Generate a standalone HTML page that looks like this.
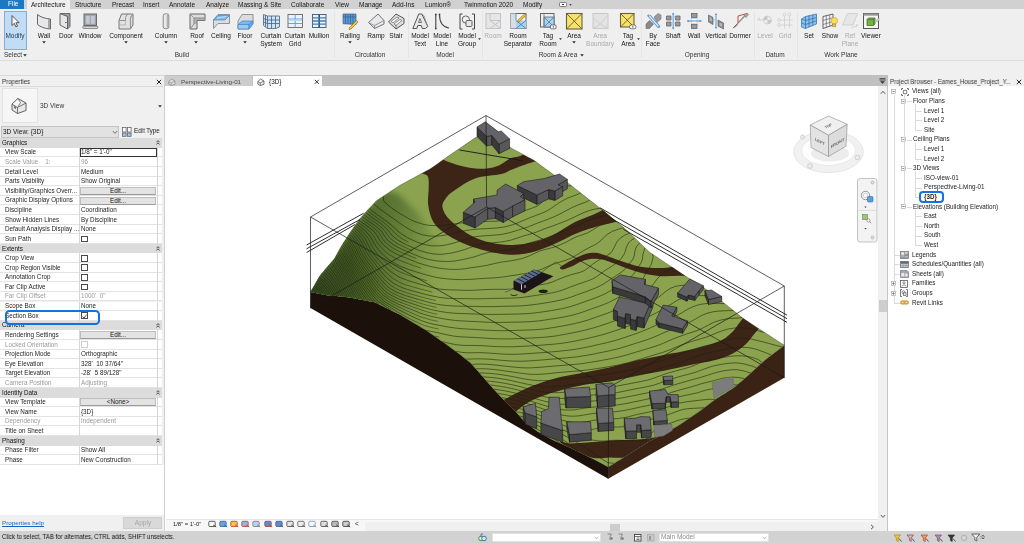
<!DOCTYPE html>
<html lang="en"><head><meta charset="utf-8"><title>Revit - Section Box</title>
<style>
*{box-sizing:border-box;margin:0;padding:0}
html,body{width:1024px;height:543px;overflow:hidden;background:#fff}
body{position:relative;font-family:"Liberation Sans",sans-serif;font-size:6.5px;color:#141414;line-height:1}
.a{position:absolute}
.t{position:absolute;white-space:nowrap;will-change:transform}
.c{position:absolute;white-space:nowrap;text-align:center;transform:translateX(-50%);will-change:transform}
#tabbar{left:0;top:0;width:1024px;height:9px;background:#d1d1d1}
#ribbon{left:0;top:9px;width:1024px;height:51px;background:#efefef}
#optbar{left:0;top:60px;width:1024px;height:15px;background:#f0f0f0;border-top:1px solid #dcdcdc}
#status{left:0;top:531px;width:1024px;height:12px;background:#d2d2d2}
.sep{position:absolute;top:11px;width:1px;height:47px;background:#e5e5e5}
.dis{color:#a9a9a9}
.row{position:absolute;left:0;width:162px;height:9.606px;border-bottom:1px solid #e3e3e3;background:#fff;font-size:6.3px}
.hdr{background:#dcdcdc;border-bottom:none}
.btn{position:absolute;left:80px;top:0.8px;width:76px;height:8px;background:#e3e3e3;border:1px solid #bdbdbd;border-bottom-color:#9a9a9a;text-align:center;line-height:6.5px}
.cb{position:absolute;left:81.3px;top:1.3px;width:6.8px;height:6.8px;border:0.8px solid #4a4a4a;background:#fff}
</style></head>
<body>
<div id="tabbar" class="a"></div>
<div class="a" style="left:0;top:0;width:24px;height:9.3px;background:#1b79c4"></div>
<div class="t" style="left:7.5px;top:1px;color:#fff">File</div>
<div class="a" style="left:27px;top:0;width:43px;height:10px;background:#efefef"></div>
<div class="t" style="left:30.5px;top:1.5px">Architecture</div>
<div class="t" style="left:75px;top:1.5px">Structure</div>
<div class="t" style="left:111.5px;top:1.5px">Precast</div>
<div class="t" style="left:142.5px;top:1.5px">Insert</div>
<div class="t" style="left:168.5px;top:1.5px">Annotate</div>
<div class="t" style="left:205.5px;top:1.5px">Analyze</div>
<div class="t" style="left:238px;top:1.5px">Massing &amp; Site</div>
<div class="t" style="left:291px;top:1.5px">Collaborate</div>
<div class="t" style="left:335px;top:1.5px">View</div>
<div class="t" style="left:358.5px;top:1.5px">Manage</div>
<div class="t" style="left:391.5px;top:1.5px">Add-Ins</div>
<div class="t" style="left:424.5px;top:1.5px">Lumion®</div>
<div class="t" style="left:463.5px;top:1.5px">Twinmotion 2020</div>
<div class="t" style="left:523px;top:1.5px">Modify</div>
<svg class="a" style="left:558px;top:1px" width="16" height="8" viewBox="0 0 16 8"><rect x="1.5" y="1.5" width="7" height="4" rx="1" fill="#fff" stroke="#555" stroke-width="0.7"/><rect x="4" y="3" width="2" height="1" fill="#333"/><path d="M11.3 3.2h2.4l-1.2 1.6z" fill="#222"/></svg>
<div id="ribbon" class="a"></div>
<div id="optbar" class="a"></div>
<div class="a" style="left:3.5px;top:11px;width:23.5px;height:38.5px;background:#c2dcf5;border:1px solid #7eaede"></div>
<div class="sep" style="left:333.5px"></div>
<div class="sep" style="left:407.5px"></div>
<div class="sep" style="left:482px"></div>
<div class="sep" style="left:641px"></div>
<div class="sep" style="left:753.5px"></div>
<div class="sep" style="left:797px"></div>
<svg class="a" style="left:6px;top:12px" width="18" height="18" viewBox="0 0 18 18"><path d="M6 3.5v10l2.3-2.2 1.6 3.6 1.6-.7-1.6-3.5h3.2z" fill="#fff" stroke="#333" stroke-width="0.8" stroke-linejoin="round"/></svg>
<div class="c" style="left:15px;top:33.3px;color:#27425e">Modify</div>
<svg class="a" style="left:35px;top:12px" width="18" height="18" viewBox="0 0 18 18"><path d="M2.5 2.5c3 2.5 7 4 13 4.5v10c-6-.5-10-2-13-4.500z" fill="#e8e8ea" stroke="#666" stroke-width="1"/><path d="M14 7v9.500" stroke="#999" stroke-width="1.6"/></svg>
<div class="c" style="left:44px;top:33.3px">Wall</div>
<svg class="a" style="left:41.7px;top:41px" width="4" height="3" viewBox="0 0 4 3"><path d="M0.200 0.300h3.600l-1.800 2.200z" fill="#2a2a2a"/></svg>
<svg class="a" style="left:57px;top:12px" width="18" height="18" viewBox="0 0 18 18"><path d="M3 1.500h10v13l-2.500 2.500" fill="#9b9ea3" stroke="#555" stroke-width="0.8"/><path d="M3 1.500l7.500 3v12.500l-7.500-4z" fill="#e6e6e8" stroke="#555" stroke-width="0.9"/><rect x="8.200" y="10" width="1.300" height="1" fill="#444"/></svg>
<div class="c" style="left:66px;top:33.3px">Door</div>
<svg class="a" style="left:80.5px;top:12px" width="18" height="18" viewBox="0 0 18 18"><rect x="3" y="2" width="12.500" height="11.500" fill="#9aa0aa" stroke="#6a6a6a" stroke-width="1"/><rect x="4.800" y="3.800" width="4" height="8" fill="#c3c8d0"/><rect x="9.800" y="3.800" width="4" height="8" fill="#c3c8d0"/><rect x="1.800" y="14.200" width="15" height="2.200" rx="0.800" fill="#e4e4e4" stroke="#666" stroke-width="0.800"/></svg>
<div class="c" style="left:89.5px;top:33.3px">Window</div>
<svg class="a" style="left:117px;top:12px" width="18" height="18" viewBox="0 0 18 18"><path d="M2 8.500l2.500-6.500h11.500v11l-2.500 4h-11.500z" fill="#e2e2e4" stroke="#777" stroke-width="1"/><path d="M16 2l-2.500 3.500v11.500" fill="none" stroke="#999" stroke-width="1.200"/><path d="M2 8.500h6.500v-3l2-3.500" fill="none" stroke="#888" stroke-width="0.900"/><path d="M8.500 8.500v4.500h-6" fill="none" stroke="#aaa" stroke-width="0.800"/></svg>
<div class="c" style="left:126px;top:33.3px">Component</div>
<svg class="a" style="left:123.7px;top:41px" width="4" height="3" viewBox="0 0 4 3"><path d="M0.200 0.300h3.600l-1.800 2.200z" fill="#2a2a2a"/></svg>
<svg class="a" style="left:157px;top:12px" width="18" height="18" viewBox="0 0 18 18"><rect x="6.200" y="1.800" width="5.600" height="14.800" rx="2" fill="#e9e9eb" stroke="#888" stroke-width="1"/><path d="M10.300 3v12.500" stroke="#aaa" stroke-width="1.200"/></svg>
<div class="c" style="left:166px;top:33.3px">Column</div>
<svg class="a" style="left:163.7px;top:41px" width="4" height="3" viewBox="0 0 4 3"><path d="M0.200 0.300h3.600l-1.800 2.200z" fill="#2a2a2a"/></svg>
<svg class="a" style="left:187.5px;top:12px" width="18" height="18" viewBox="0 0 18 18"><path d="M2 2h15v6.500h-8v8.500h-7z" fill="#dcdcde" stroke="#666" stroke-width="1"/><path d="M2 17l4-5v-6h11" fill="none" stroke="#8a8a8a" stroke-width="1"/><path d="M6 6l-4-4" stroke="#8a8a8a" stroke-width="0.800"/><path d="M9 8.500h8v-2.500h-11v6l3 0z" fill="#9a9a9c" opacity=".7"/></svg>
<div class="c" style="left:196.5px;top:33.3px">Roof</div>
<svg class="a" style="left:194.2px;top:41px" width="4" height="3" viewBox="0 0 4 3"><path d="M0.200 0.300h3.600l-1.800 2.200z" fill="#2a2a2a"/></svg>
<svg class="a" style="left:211.6px;top:12px" width="18" height="18" viewBox="0 0 18 18"><path d="M1.500 8l4.500-5.500h11.500v9h-11.500l-4.500 5z" fill="#dedee0" stroke="#888" stroke-width="0.900"/><path d="M1.500 8l4.500-4.500h11.500l-4.500 4.500z" fill="#7db9ee" stroke="#3f86c8" stroke-width="0.700"/><path d="M5 6.500c3-1.500 6-1 9-2" stroke="#cfe6fa" stroke-width="1" fill="none"/></svg>
<div class="c" style="left:220.6px;top:33.3px">Ceiling</div>
<svg class="a" style="left:236px;top:12px" width="18" height="18" viewBox="0 0 18 18"><path d="M2 9l4-6.500h11v9l-4 5.500h-11z" fill="#dcdcde" stroke="#888" stroke-width="0.900"/><path d="M2 12.500l4-3.500h11l-4 3.500z" fill="#7db9ee" stroke="#3f86c8" stroke-width="0.700"/><path d="M2 12.500h11v4.500h-11z" fill="#9ccaf2" stroke="#3f86c8" stroke-width="0.700"/><path d="M13 12.500l4-3.500v3l-4 5z" fill="#6aa7de" stroke="#3f86c8" stroke-width="0.600"/></svg>
<div class="c" style="left:245px;top:33.3px">Floor</div>
<svg class="a" style="left:242.7px;top:41px" width="4" height="3" viewBox="0 0 4 3"><path d="M0.200 0.300h3.600l-1.800 2.200z" fill="#2a2a2a"/></svg>
<svg class="a" style="left:261.7px;top:12px" width="18" height="18" viewBox="0 0 18 18"><path d="M1.500 2.500l4 1.500h12v11l-4 1.500h-8l-4-3z" fill="#cfe3f6" stroke="#5b6f86" stroke-width="0.900"/><path d="M5.500 4v12.500M9.500 4v12.500M13.500 4v12.500M1.500 6.500l4 1.500h12M1.500 10l4 1.500h12M3.500 3.200v11.500" fill="none" stroke="#44617f" stroke-width="0.800"/></svg>
<div class="c" style="left:270.7px;top:33.3px">Curtain</div>
<div class="c" style="left:270.7px;top:41.2px">System</div>
<svg class="a" style="left:285.5px;top:12px" width="18" height="18" viewBox="0 0 18 18"><rect x="2" y="2.500" width="14.500" height="13" fill="#eaf2fa" stroke="#666" stroke-width="0.900"/><path d="M2 7h14.500M2 11.500h14.500M9.200 2.500v13" stroke="#5b9bd5" stroke-width="0.900"/><rect x="2.500" y="7.500" width="13.500" height="1.500" fill="#bcd9f2"/></svg>
<div class="c" style="left:294.5px;top:33.3px">Curtain</div>
<div class="c" style="left:294.5px;top:41.2px">Grid</div>
<svg class="a" style="left:310px;top:12px" width="18" height="18" viewBox="0 0 18 18"><rect x="2.500" y="2.500" width="13.500" height="13" fill="#e9f1f9" stroke="#3d5a78" stroke-width="0.900"/><path d="M9.200 2.500v13" stroke="#2d4c6c" stroke-width="1.600"/><path d="M2.500 5.800h13.500M2.500 9h13.500M2.500 12.200h13.500" stroke="#3f7fbd" stroke-width="1.300"/></svg>
<div class="c" style="left:319px;top:33.3px">Mullion</div>
<svg class="a" style="left:341.4px;top:12px" width="18" height="18" viewBox="0 0 18 18"><path d="M2 2h13v10.500l-13-.8z" fill="#5b9bd5" stroke="#44617f" stroke-width="0.700"/><path d="M4.500 2v10M7 2v10M9.500 2v10M12 2v10M2 5h13" stroke="#2f5f92" stroke-width="0.700"/><path d="M8.500 15.500l7-7 1.500 1.500-7 7-2 .5z" fill="#f2c43a" stroke="#8a6a14" stroke-width="0.600"/></svg>
<div class="c" style="left:350.4px;top:33.3px">Railing</div>
<svg class="a" style="left:348.1px;top:41px" width="4" height="3" viewBox="0 0 4 3"><path d="M0.200 0.300h3.600l-1.800 2.200z" fill="#2a2a2a"/></svg>
<svg class="a" style="left:366.6px;top:12px" width="18" height="18" viewBox="0 0 18 18"><path d="M1.500 10.500l9.500-8.500 6 6.500v3.500l-9.500 4.500z" fill="#e9e9eb" stroke="#666" stroke-width="0.900"/><path d="M17 8.500l-9.500 5 0 3" fill="none" stroke="#888" stroke-width="0.900"/><path d="M7.500 13.500l-6-3" stroke="#888" stroke-width="0.800"/></svg>
<div class="c" style="left:375.6px;top:33.3px">Ramp</div>
<svg class="a" style="left:387px;top:12px" width="18" height="18" viewBox="0 0 18 18"><path d="M1.500 10l7.500-8 8 4.500v5l-8 5.500z" fill="#dedee0" stroke="#555" stroke-width="1"/><path d="M4 9.500l6-4.500 2 1-6 4.800zM7 12l6-4.500 2 1-6 4.800z" fill="#fff" stroke="#666" stroke-width="0.700"/><path d="M9 17v-4" stroke="#666" stroke-width="0.800"/></svg>
<div class="c" style="left:396px;top:33.3px">Stair</div>
<svg class="a" style="left:411px;top:12px" width="18" height="18" viewBox="0 0 18 18"><path d="M1.800 16.500l6-14.500h3l6 12.500-2.500 2h-3l-1-3h-3.500l-1 3z" fill="#e9e9eb" stroke="#555" stroke-width="1"/><path d="M7.500 10.500h3l-1.500-4z" fill="#efefef" stroke="#555" stroke-width="0.800"/><path d="M10.800 2l2 1.500 4 11" fill="none" stroke="#888" stroke-width="0.800"/></svg>
<div class="c" style="left:420px;top:33.3px">Model</div>
<div class="c" style="left:420px;top:41.2px">Text</div>
<svg class="a" style="left:432.5px;top:12px" width="18" height="18" viewBox="0 0 18 18"><path d="M2.800 2.500v14" stroke="#444" stroke-width="1.100"/><path d="M6.500 2.500c0 8 3 12.500 9.500 13.500" fill="none" stroke="#444" stroke-width="1.100"/><circle cx="2.800" cy="2.500" r="0.900" fill="#444"/><circle cx="2.800" cy="16.500" r="0.900" fill="#444"/><circle cx="6.500" cy="2.500" r="0.900" fill="#444"/></svg>
<div class="c" style="left:441.5px;top:33.3px">Model</div>
<div class="c" style="left:441.5px;top:41.2px">Line</div>
<svg class="a" style="left:457.5px;top:12px" width="18" height="18" viewBox="0 0 18 18"><path d="M4.500 2h-2.500v15h2.500M14 2h2.500v15h-2.500" fill="none" stroke="#444" stroke-width="1"/><circle cx="7.800" cy="7.500" r="3.600" fill="#efefef" stroke="#555" stroke-width="0.900"/><rect x="8" y="8.500" width="6" height="6" rx="1" fill="#e6e6e8" stroke="#555" stroke-width="0.900"/></svg>
<div class="c" style="left:466.5px;top:33.3px">Model</div>
<div class="c" style="left:466.5px;top:41.2px">Group</div>
<svg class="a" style="left:477.5px;top:38.300px" width="3" height="3" viewBox="0 0 3 3"><path d="M0.100 0.300h2.800l-1.400 1.800z" fill="#2a2a2a"/></svg>
<svg class="a" style="left:484px;top:12px" width="18" height="18" viewBox="0 0 18 18"><rect x="2" y="1.500" width="14.500" height="15" fill="#e6e6e6" stroke="#c4c4c4" stroke-width="1"/><path d="M6 1.500v7h10.500M6 8.500l10.500 8M16.500 8.500l-10.500 8" fill="none" stroke="#c4c4c4" stroke-width="1"/></svg>
<div class="c dis" style="left:493px;top:33.3px">Room</div>
<svg class="a" style="left:509px;top:12px" width="18" height="18" viewBox="0 0 18 18"><rect x="2" y="1.500" width="15" height="15" fill="#f3f3f3" stroke="#666" stroke-width="1"/><path d="M7 1.500v7h10v8h-10z" fill="#a9d4f0"/><path d="M2 1.500h5v15h-5z" fill="#d5dde6"/><path d="M7 8.500l10 8M17 8.500l-10 8M7 1.500v7" stroke="#3d7fb5" stroke-width="0.800" fill="none"/><path d="M9 8l6.500-6 1.500 1.500-6.500 6-2 .5z" fill="#f2c43a" stroke="#8a6a14" stroke-width="0.600"/></svg>
<div class="c" style="left:518px;top:33.3px">Room</div>
<div class="c" style="left:518px;top:41.2px">Separator</div>
<svg class="a" style="left:538.7px;top:12px" width="18" height="18" viewBox="0 0 18 18"><rect x="1.500" y="1.500" width="13.500" height="13.500" fill="#eee" stroke="#666" stroke-width="1"/><rect x="5" y="5" width="10" height="10" fill="#a9d4f0" stroke="#556" stroke-width="0.700"/><path d="M5 5l10 10M15 5l-10 10" stroke="#3d7fb5" stroke-width="0.800"/><path d="M5 1.500v13.500" stroke="#777" stroke-width="0.800"/><rect x="11.500" y="13" width="5.500" height="3.800" rx="0.800" fill="#fff" stroke="#555" stroke-width="0.800"/><rect x="13.800" y="14.300" width="1" height="1.200" fill="#333"/></svg>
<div class="c" style="left:547.7px;top:33.3px">Tag</div>
<div class="c" style="left:547.7px;top:41.2px">Room</div>
<svg class="a" style="left:558.7px;top:38.300px" width="3" height="3" viewBox="0 0 3 3"><path d="M0.100 0.300h2.800l-1.400 1.800z" fill="#2a2a2a"/></svg>
<svg class="a" style="left:565px;top:12px" width="18" height="18" viewBox="0 0 18 18"><rect x="1.500" y="1.500" width="15.500" height="15.500" fill="#f7e26b" stroke="#6a6240" stroke-width="1.100"/><path d="M1.500 1.500l15.500 15.500M17 1.500l-15.500 15.500" stroke="#6a5a20" stroke-width="0.900"/></svg>
<div class="c" style="left:574px;top:33.3px">Area</div>
<svg class="a" style="left:571.7px;top:41px" width="4" height="3" viewBox="0 0 4 3"><path d="M0.200 0.300h3.600l-1.800 2.200z" fill="#2a2a2a"/></svg>
<svg class="a" style="left:591px;top:12px" width="18" height="18" viewBox="0 0 18 18"><rect x="2" y="1.500" width="15" height="15" fill="#e3e3e3" stroke="#cacaca" stroke-width="1"/><path d="M2 6l7.500 6 7.500-9M2 16.500l7.500-4.500 7.500 4.500" fill="none" stroke="#cfcfcf" stroke-width="1"/></svg>
<div class="c dis" style="left:600px;top:33.3px">Area</div>
<div class="c dis" style="left:600px;top:41.2px">Boundary</div>
<svg class="a" style="left:618.5px;top:12px" width="18" height="18" viewBox="0 0 18 18"><rect x="1.500" y="1.500" width="13.500" height="13.500" fill="#f7e26b" stroke="#6a6240" stroke-width="1.100"/><path d="M1.500 1.500l13.500 13.500M15 1.500l-13.500 13.500" stroke="#6a5a20" stroke-width="0.900"/><rect x="10.500" y="13" width="6.500" height="3.800" rx="1.800" fill="#fff" stroke="#555" stroke-width="0.800"/><rect x="13.300" y="14.200" width="1" height="1.400" fill="#333"/></svg>
<div class="c" style="left:627.5px;top:33.3px">Tag</div>
<div class="c" style="left:627.5px;top:41.2px">Area</div>
<svg class="a" style="left:637.0px;top:38.300px" width="3" height="3" viewBox="0 0 3 3"><path d="M0.100 0.300h2.800l-1.400 1.800z" fill="#2a2a2a"/></svg>
<svg class="a" style="left:644px;top:12px" width="18" height="18" viewBox="0 0 18 18"><path d="M10 5l4-3.500 3 1.500v4l-4 3.500z" fill="#9a9a9c" stroke="#777" stroke-width="0.600"/><path d="M2 12l3.500-3.500 4 3.500-4 4.500h-3.500z" fill="#8a8a8c" stroke="#666" stroke-width="0.600"/><path d="M3.500 3.500l11 12.500M6 3l10 11.500" stroke="#5b9bd5" stroke-width="1.100"/><circle cx="4.500" cy="3.500" r="1" fill="#5b9bd5"/><circle cx="15" cy="15" r="1" fill="#5b9bd5"/></svg>
<div class="c" style="left:653px;top:33.3px">By</div>
<div class="c" style="left:653px;top:41.2px">Face</div>
<svg class="a" style="left:663.7px;top:12px" width="18" height="18" viewBox="0 0 18 18"><path d="M2.500 4h4.500v4h-4.500zM2.500 10h4.500v4h-4.500zM11.500 4h4.500v4h-4.500zM11.500 10h4.500v4h-4.500z" fill="#9a9a9c" stroke="#666" stroke-width="0.800"/><path d="M9.200 1v16" stroke="#5b9bd5" stroke-width="1"/><path d="M7 5h4.500M7 12h4.500" stroke="#9fc6ea" stroke-width="1"/><path d="M9.200 0.500l-1.300 2h2.600zM9.200 17.500l-1.300-2h2.600z" fill="#5b9bd5"/></svg>
<div class="c" style="left:672.7px;top:33.3px">Shaft</div>
<svg class="a" style="left:684.7px;top:12px" width="18" height="18" viewBox="0 0 18 18"><rect x="6.500" y="1.500" width="5.500" height="4" fill="#9a9a9c" stroke="#666" stroke-width="0.800"/><rect x="6.500" y="12.500" width="5.500" height="4" fill="#9a9a9c" stroke="#666" stroke-width="0.800"/><rect x="6.500" y="6.500" width="5.500" height="5" fill="#fff" stroke="#9fc6ea" stroke-width="0.600"/><path d="M2 9h14.500" stroke="#5b9bd5" stroke-width="1.100"/><path d="M2 9l2-1.300v2.600zM16.500 9l-2-1.300v2.600z" fill="#5b9bd5"/></svg>
<div class="c" style="left:693.7px;top:33.3px">Wall</div>
<svg class="a" style="left:707px;top:12px" width="18" height="18" viewBox="0 0 18 18"><path d="M1.500 3l4.500 2.500v7l-4.500-2.500zM11 8l5.500 3v6l-5.500-3z" fill="#8a8a8c" stroke="#666" stroke-width="0.700"/><path d="M2.800 5l2 1v3.500l-2-1zM12.500 10.500l2.500 1.300v3l-2.500-1.300z" fill="#b8b8ba"/><path d="M9 2v14" stroke="#5b9bd5" stroke-width="1"/><path d="M9 1l-1.300 2h2.600zM9 17l-1.300-2h2.600z" fill="#5b9bd5"/><path d="M6.500 7.500l4 2" stroke="#9fc6ea" stroke-width="1"/></svg>
<div class="c" style="left:716px;top:33.3px">Vertical</div>
<svg class="a" style="left:730.6px;top:12px" width="18" height="18" viewBox="0 0 18 18"><path d="M2 16l5-5v-7l9-2.500" fill="none" stroke="#c0392b" stroke-width="0.900"/><path d="M7 11l9-9.500" stroke="#888" stroke-width="1.100"/><path d="M13 3.500l3-2.500 1.500 1.500-2.500 3z" fill="#aaa" stroke="#777" stroke-width="0.600"/><path d="M2 16l3.500-2 1.500-3" fill="none" stroke="#888" stroke-width="1"/></svg>
<div class="c" style="left:739.6px;top:33.3px">Dormer</div>
<svg class="a" style="left:756px;top:12px" width="18" height="18" viewBox="0 0 18 18"><path d="M1 8h7" stroke="#cfcfcf" stroke-width="1"/><circle cx="11.500" cy="8" r="4" fill="#ececec" stroke="#cfcfcf" stroke-width="0.900"/><path d="M11.500 8v-4a4 4 0 0 0-4 4zM11.500 8v4a4 4 0 0 0 4-4z" fill="#c6c6c6"/><path d="M3 5v3" stroke="#cfcfcf" stroke-width="0.900"/></svg>
<div class="c dis" style="left:765px;top:33.3px">Level</div>
<svg class="a" style="left:776.4px;top:12px" width="18" height="18" viewBox="0 0 18 18"><path d="M8.500 3.500v13M13.500 3.500v13M4.500 8h12M4.500 13h12" stroke="#d2d2d2" stroke-width="0.900"/><circle cx="8.500" cy="2.500" r="1.500" fill="#efefef" stroke="#cfcfcf" stroke-width="0.800"/><circle cx="13.500" cy="2.500" r="1.500" fill="#efefef" stroke="#cfcfcf" stroke-width="0.800"/><circle cx="3" cy="8" r="1.500" fill="#efefef" stroke="#cfcfcf" stroke-width="0.800"/><circle cx="3" cy="13" r="1.500" fill="#efefef" stroke="#cfcfcf" stroke-width="0.800"/></svg>
<div class="c dis" style="left:785.4px;top:33.3px">Grid</div>
<svg class="a" style="left:800px;top:12px" width="18" height="18" viewBox="0 0 18 18"><path d="M1.500 7l4-2.500 11-2.500v10l-11 4.500-4-1.500z" fill="#8cc0ee" stroke="#3f78b0" stroke-width="0.800"/><path d="M5.500 4.500v12M9 3.700v11.300M12.800 2.800v10.700M5.500 8.500l11-3M5.500 12.500l11-3.800M1.500 7l4 1.500M1.500 11l4 1.500" fill="none" stroke="#2f6aa3" stroke-width="0.700"/></svg>
<div class="c" style="left:809px;top:33.3px">Set</div>
<svg class="a" style="left:821px;top:12px" width="18" height="18" viewBox="0 0 18 18"><path d="M2 4.500l10-2.500v11l-10 3.500z" fill="#f4f4f4" stroke="#555" stroke-width="0.900"/><path d="M5.300 3.700v11.800M8.700 2.800v11.800M2 8.500l10-2.800M2 12.500l10-3" stroke="#666" stroke-width="0.700" fill="none"/><circle cx="13.300" cy="8.800" r="3.300" fill="#f8dc5a" stroke="#c9a227" stroke-width="0.600"/><rect x="11.800" y="12" width="3" height="2.800" fill="#e8c84a" stroke="#8a7a3a" stroke-width="0.500"/></svg>
<div class="c" style="left:830px;top:33.3px">Show</div>
<svg class="a" style="left:841.4px;top:12px" width="18" height="18" viewBox="0 0 18 18"><path d="M1.500 13l5-11.500h10l-4.500 11.500z" fill="#e6e6e6" stroke="#cdcdcd" stroke-width="0.900"/><path d="M10 16l6.500-2.500M16.500 13.500l-1.500-1.300M16.500 13.500l-1.800 1.300" stroke="#cdcdcd" stroke-width="0.900" fill="none"/></svg>
<div class="c dis" style="left:850.4px;top:33.3px">Ref</div>
<div class="c dis" style="left:850.4px;top:41.2px">Plane</div>
<svg class="a" style="left:862px;top:12px" width="18" height="18" viewBox="0 0 18 18"><rect x="1.500" y="1.500" width="15" height="15" fill="#f5f5f5" stroke="#555" stroke-width="1"/><rect x="1.500" y="1.500" width="15" height="2.200" fill="#9a9a9a"/><path d="M5 7.500l1.500-1.500h6.500v6l-1.500 1.500h-6.500z" fill="#74b04a" stroke="#3f7a20" stroke-width="0.800"/><path d="M5 7.500h6.500v6M11.500 7.500l1.500-1.500" fill="none" stroke="#3f7a20" stroke-width="0.600"/><path d="M14 8.500l3-2.500v2l-2 2z" fill="#ddd" stroke="#888" stroke-width="0.500"/></svg>
<div class="c" style="left:871px;top:33.3px">Viewer</div>
<div class="c" style="left:182px;top:51.5px;color:#333">Build</div>
<div class="c" style="left:369.7px;top:51.5px;color:#333">Circulation</div>
<div class="c" style="left:445px;top:51.5px;color:#333">Model</div>
<div class="c" style="left:697px;top:51.5px;color:#333">Opening</div>
<div class="c" style="left:775px;top:51.5px;color:#333">Datum</div>
<div class="c" style="left:840.6px;top:51.5px;color:#333">Work Plane</div>
<div class="t" style="left:3.5px;top:51.5px;color:#333">Select</div>
<svg class="a" style="left:22.500px;top:54px" width="4" height="3" viewBox="0 0 4 3"><path d="M0.200 0.300h3.600l-1.800 2.200z" fill="#2a2a2a"/></svg>
<div class="c" style="left:558px;top:51.5px;color:#333">Room &amp; Area</div>
<svg class="a" style="left:580.200px;top:54px" width="4" height="3" viewBox="0 0 4 3"><path d="M0.200 0.300h3.600l-1.800 2.200z" fill="#2a2a2a"/></svg>
<div class="a" style="left:0;top:75px;width:165px;height:456px;background:#f0f0f0;border-right:1px solid #cfcfcf"></div>
<div class="a" style="left:0;top:75px;width:165px;height:1px;background:#d9d9d9"></div>
<div class="t" style="left:2px;top:78.5px;font-size:6.5px;transform:scaleX(.95);transform-origin:0 0;color:#333">Properties</div>
<svg class="a" style="left:155.5px;top:78.5px" width="6" height="6" viewBox="0 0 6 6"><path d="M0.800 0.800l4.400 4.400M5.200 0.800l-4.400 4.400" stroke="#222" stroke-width="1"/></svg>
<div class="a" style="left:0;top:86px;width:164px;height:1px;background:#dadada"></div>
<div class="a" style="left:2.4px;top:88px;width:35.5px;height:34.5px;background:#f6f6f6;border:1px solid #e2e2e2"></div>
<svg class="a" style="left:10px;top:96px" width="19" height="19" viewBox="0 0 19 19"><path d="M2 8l6-5.500 8 4.500v7.500l-8.500 3-5.500-3.500z" fill="#e8e8ea" stroke="#555" stroke-width="0.900"/><path d="M2 8l5.500 3.500 8.500-4.500M7.500 11.500v6" fill="none" stroke="#555" stroke-width="0.800"/><path d="M8 2.500l-6 5.500 5.500 3.500 3-5z" fill="#f7f7f7" stroke="#555" stroke-width="0.700"/><path d="M4 12v-2.500l2 1.200v2.600z" fill="#777"/></svg>
<div class="t" style="left:39.5px;top:103.2px;color:#333">3D View</div>
<svg class="a" style="left:157.500px;top:105px" width="4" height="3" viewBox="0 0 4 3"><path d="M0.200 0.300h3.600l-1.800 2.200z" fill="#2a2a2a"/></svg>
<div class="a" style="left:0.5px;top:125.8px;width:118.5px;height:12px;background:#e2e2e2;border:1px solid #c4c4c4"></div>
<div class="t" style="left:2.5px;top:128.6px">3D View: {3D}</div>
<svg class="a" style="left:111.500px;top:129.500px" width="6" height="5" viewBox="0 0 6 5"><path d="M0.800 1l2.200 2.400 2.200-2.400" fill="none" stroke="#555" stroke-width="0.800"/></svg>
<svg class="a" style="left:122px;top:126.500px" width="10" height="10" viewBox="0 0 10 10"><rect x="0.500" y="0.500" width="3.600" height="4.500" fill="#fff" stroke="#556" stroke-width="0.700"/><rect x="5.500" y="0.500" width="3.600" height="4.500" fill="#fff" stroke="#556" stroke-width="0.700"/><rect x="0.500" y="6" width="3.600" height="3.300" fill="#9ec4e8" stroke="#556" stroke-width="0.700"/><rect x="5.500" y="6" width="3.600" height="3.300" fill="#9ec4e8" stroke="#556" stroke-width="0.700"/></svg>
<div class="t" style="left:133.8px;top:128px;font-size:6.5px;transform:scaleX(.95);transform-origin:0 0">Edit Type</div>
<div class="row hdr" style="top:138.20px"><div class="t" style="left:1.8px;top:1.7px;color:#111">Graphics</div><svg class="a" style="left:156px;top:2.200px" width="4" height="5" viewBox="0 0 4 5"><path d="M0.400 2.300l1.600-1.700 1.600 1.700M0.400 4.500l1.600-1.700 1.600 1.700" fill="none" stroke="#111" stroke-width="0.700"/></svg></div>
<div class="row" style="top:147.81px"><div class="t" style="left:4.8px;top:1.6px;color:#1e1e1e">View Scale</div><div class="a" style="left:79px;top:0;width:1px;height:9.6px;background:#d6d6d6"></div><div class="a" style="left:156.5px;top:0;width:1px;height:9.6px;background:#d6d6d6"></div><div class="a" style="left:79.5px;top:0.300px;width:77.500px;height:8.800px;border:1px solid #333;background:#fff"></div><div class="t" style="left:81px;top:1.6px;color:#1e1e1e">1/8" = 1'-0"</div></div>
<div class="row" style="top:157.41px"><div class="t" style="left:4.8px;top:1.6px;color:#9a9a9a">Scale Value&nbsp;&nbsp;&nbsp; 1:</div><div class="a" style="left:79px;top:0;width:1px;height:9.6px;background:#d6d6d6"></div><div class="a" style="left:156.5px;top:0;width:1px;height:9.6px;background:#d6d6d6"></div><div class="t" style="left:81px;top:1.6px;color:#9a9a9a">96</div></div>
<div class="row" style="top:167.02px"><div class="t" style="left:4.8px;top:1.6px;color:#1e1e1e">Detail Level</div><div class="a" style="left:79px;top:0;width:1px;height:9.6px;background:#d6d6d6"></div><div class="a" style="left:156.5px;top:0;width:1px;height:9.6px;background:#d6d6d6"></div><div class="t" style="left:81px;top:1.6px;color:#1e1e1e">Medium</div></div>
<div class="row" style="top:176.62px"><div class="t" style="left:4.8px;top:1.6px;color:#1e1e1e">Parts Visibility</div><div class="a" style="left:79px;top:0;width:1px;height:9.6px;background:#d6d6d6"></div><div class="a" style="left:156.5px;top:0;width:1px;height:9.6px;background:#d6d6d6"></div><div class="t" style="left:81px;top:1.6px;color:#1e1e1e">Show Original</div></div>
<div class="row" style="top:186.23px"><div class="t" style="left:4.8px;top:1.6px;color:#1e1e1e">Visibility/Graphics Overr...</div><div class="a" style="left:79px;top:0;width:1px;height:9.6px;background:#d6d6d6"></div><div class="a" style="left:156.5px;top:0;width:1px;height:9.6px;background:#d6d6d6"></div><div class="btn">Edit...</div></div>
<div class="row" style="top:195.84px"><div class="t" style="left:4.8px;top:1.6px;color:#1e1e1e">Graphic Display Options</div><div class="a" style="left:79px;top:0;width:1px;height:9.6px;background:#d6d6d6"></div><div class="a" style="left:156.5px;top:0;width:1px;height:9.6px;background:#d6d6d6"></div><div class="btn">Edit...</div></div>
<div class="row" style="top:205.44px"><div class="t" style="left:4.8px;top:1.6px;color:#1e1e1e">Discipline</div><div class="a" style="left:79px;top:0;width:1px;height:9.6px;background:#d6d6d6"></div><div class="a" style="left:156.5px;top:0;width:1px;height:9.6px;background:#d6d6d6"></div><div class="t" style="left:81px;top:1.6px;color:#1e1e1e">Coordination</div></div>
<div class="row" style="top:215.05px"><div class="t" style="left:4.8px;top:1.6px;color:#1e1e1e">Show Hidden Lines</div><div class="a" style="left:79px;top:0;width:1px;height:9.6px;background:#d6d6d6"></div><div class="a" style="left:156.5px;top:0;width:1px;height:9.6px;background:#d6d6d6"></div><div class="t" style="left:81px;top:1.6px;color:#1e1e1e">By Discipline</div></div>
<div class="row" style="top:224.65px"><div class="t" style="left:4.8px;top:1.6px;color:#1e1e1e">Default Analysis Display ...</div><div class="a" style="left:79px;top:0;width:1px;height:9.6px;background:#d6d6d6"></div><div class="a" style="left:156.5px;top:0;width:1px;height:9.6px;background:#d6d6d6"></div><div class="t" style="left:81px;top:1.6px;color:#1e1e1e">None</div></div>
<div class="row" style="top:234.26px"><div class="t" style="left:4.8px;top:1.6px;color:#1e1e1e">Sun Path</div><div class="a" style="left:79px;top:0;width:1px;height:9.6px;background:#d6d6d6"></div><div class="a" style="left:156.5px;top:0;width:1px;height:9.6px;background:#d6d6d6"></div><div class="cb" style="border-color:#4a4a4a"></div></div>
<div class="row hdr" style="top:243.87px"><div class="t" style="left:1.8px;top:1.7px;color:#111">Extents</div><svg class="a" style="left:156px;top:2.200px" width="4" height="5" viewBox="0 0 4 5"><path d="M0.400 2.300l1.600-1.700 1.600 1.700M0.400 4.500l1.600-1.700 1.600 1.700" fill="none" stroke="#111" stroke-width="0.700"/></svg></div>
<div class="row" style="top:253.47px"><div class="t" style="left:4.8px;top:1.6px;color:#1e1e1e">Crop View</div><div class="a" style="left:79px;top:0;width:1px;height:9.6px;background:#d6d6d6"></div><div class="a" style="left:156.5px;top:0;width:1px;height:9.6px;background:#d6d6d6"></div><div class="cb" style="border-color:#4a4a4a"></div></div>
<div class="row" style="top:263.08px"><div class="t" style="left:4.8px;top:1.6px;color:#1e1e1e">Crop Region Visible</div><div class="a" style="left:79px;top:0;width:1px;height:9.6px;background:#d6d6d6"></div><div class="a" style="left:156.5px;top:0;width:1px;height:9.6px;background:#d6d6d6"></div><div class="cb" style="border-color:#4a4a4a"></div></div>
<div class="row" style="top:272.68px"><div class="t" style="left:4.8px;top:1.6px;color:#1e1e1e">Annotation Crop</div><div class="a" style="left:79px;top:0;width:1px;height:9.6px;background:#d6d6d6"></div><div class="a" style="left:156.5px;top:0;width:1px;height:9.6px;background:#d6d6d6"></div><div class="cb" style="border-color:#4a4a4a"></div></div>
<div class="row" style="top:282.29px"><div class="t" style="left:4.8px;top:1.6px;color:#1e1e1e">Far Clip Active</div><div class="a" style="left:79px;top:0;width:1px;height:9.6px;background:#d6d6d6"></div><div class="a" style="left:156.5px;top:0;width:1px;height:9.6px;background:#d6d6d6"></div><div class="cb" style="border-color:#4a4a4a"></div></div>
<div class="row" style="top:291.90px"><div class="t" style="left:4.8px;top:1.6px;color:#9a9a9a">Far Clip Offset</div><div class="a" style="left:79px;top:0;width:1px;height:9.6px;background:#d6d6d6"></div><div class="a" style="left:156.5px;top:0;width:1px;height:9.6px;background:#d6d6d6"></div><div class="t" style="left:81px;top:1.6px;color:#9a9a9a">1000'&nbsp; 0"</div></div>
<div class="row" style="top:301.50px"><div class="t" style="left:4.8px;top:1.6px;color:#1e1e1e">Scope Box</div><div class="a" style="left:79px;top:0;width:1px;height:9.6px;background:#d6d6d6"></div><div class="a" style="left:156.5px;top:0;width:1px;height:9.6px;background:#d6d6d6"></div><div class="t" style="left:81px;top:1.6px;color:#1e1e1e">None</div></div>
<div class="row" style="top:311.11px"><div class="t" style="left:4.8px;top:1.6px;color:#1e1e1e">Section Box</div><div class="a" style="left:79px;top:0;width:1px;height:9.6px;background:#d6d6d6"></div><div class="a" style="left:156.5px;top:0;width:1px;height:9.6px;background:#d6d6d6"></div><div class="cb" style="border-color:#4a4a4a"></div><svg class="a" style="left:82.300px;top:2.400px" width="5" height="5" viewBox="0 0 5 5"><path d="M0.600 2.600l1.400 1.500 2.500-3.400" fill="none" stroke="#222" stroke-width="0.800"/></svg></div>
<div class="row hdr" style="top:320.71px"><div class="t" style="left:1.8px;top:1.7px;color:#111">Camera</div><svg class="a" style="left:156px;top:2.200px" width="4" height="5" viewBox="0 0 4 5"><path d="M0.400 2.300l1.600-1.700 1.600 1.700M0.400 4.500l1.600-1.700 1.600 1.700" fill="none" stroke="#111" stroke-width="0.700"/></svg></div>
<div class="row" style="top:330.32px"><div class="t" style="left:4.8px;top:1.6px;color:#1e1e1e">Rendering Settings</div><div class="a" style="left:79px;top:0;width:1px;height:9.6px;background:#d6d6d6"></div><div class="a" style="left:156.5px;top:0;width:1px;height:9.6px;background:#d6d6d6"></div><div class="btn">Edit...</div></div>
<div class="row" style="top:339.93px"><div class="t" style="left:4.8px;top:1.6px;color:#9a9a9a">Locked Orientation</div><div class="a" style="left:79px;top:0;width:1px;height:9.6px;background:#d6d6d6"></div><div class="a" style="left:156.5px;top:0;width:1px;height:9.6px;background:#d6d6d6"></div><div class="cb" style="border-color:#cfcfcf"></div></div>
<div class="row" style="top:349.53px"><div class="t" style="left:4.8px;top:1.6px;color:#1e1e1e">Projection Mode</div><div class="a" style="left:79px;top:0;width:1px;height:9.6px;background:#d6d6d6"></div><div class="a" style="left:156.5px;top:0;width:1px;height:9.6px;background:#d6d6d6"></div><div class="t" style="left:81px;top:1.6px;color:#1e1e1e">Orthographic</div></div>
<div class="row" style="top:359.14px"><div class="t" style="left:4.8px;top:1.6px;color:#1e1e1e">Eye Elevation</div><div class="a" style="left:79px;top:0;width:1px;height:9.6px;background:#d6d6d6"></div><div class="a" style="left:156.5px;top:0;width:1px;height:9.6px;background:#d6d6d6"></div><div class="t" style="left:81px;top:1.6px;color:#1e1e1e">328'&nbsp; 10 37/64"</div></div>
<div class="row" style="top:368.74px"><div class="t" style="left:4.8px;top:1.6px;color:#1e1e1e">Target Elevation</div><div class="a" style="left:79px;top:0;width:1px;height:9.6px;background:#d6d6d6"></div><div class="a" style="left:156.5px;top:0;width:1px;height:9.6px;background:#d6d6d6"></div><div class="t" style="left:81px;top:1.6px;color:#1e1e1e">-28'&nbsp; 5 89/128"</div></div>
<div class="row" style="top:378.35px"><div class="t" style="left:4.8px;top:1.6px;color:#9a9a9a">Camera Position</div><div class="a" style="left:79px;top:0;width:1px;height:9.6px;background:#d6d6d6"></div><div class="a" style="left:156.5px;top:0;width:1px;height:9.6px;background:#d6d6d6"></div><div class="t" style="left:81px;top:1.6px;color:#9a9a9a">Adjusting</div></div>
<div class="row hdr" style="top:387.96px"><div class="t" style="left:1.8px;top:1.7px;color:#111">Identity Data</div><svg class="a" style="left:156px;top:2.200px" width="4" height="5" viewBox="0 0 4 5"><path d="M0.400 2.300l1.600-1.700 1.600 1.700M0.400 4.500l1.600-1.700 1.600 1.700" fill="none" stroke="#111" stroke-width="0.700"/></svg></div>
<div class="row" style="top:397.56px"><div class="t" style="left:4.8px;top:1.6px;color:#1e1e1e">View Template</div><div class="a" style="left:79px;top:0;width:1px;height:9.6px;background:#d6d6d6"></div><div class="a" style="left:156.5px;top:0;width:1px;height:9.6px;background:#d6d6d6"></div><div class="btn">&lt;None&gt;</div></div>
<div class="row" style="top:407.17px"><div class="t" style="left:4.8px;top:1.6px;color:#1e1e1e">View Name</div><div class="a" style="left:79px;top:0;width:1px;height:9.6px;background:#d6d6d6"></div><div class="a" style="left:156.5px;top:0;width:1px;height:9.6px;background:#d6d6d6"></div><div class="t" style="left:81px;top:1.6px;color:#1e1e1e">{3D}</div></div>
<div class="row" style="top:416.77px"><div class="t" style="left:4.8px;top:1.6px;color:#9a9a9a">Dependency</div><div class="a" style="left:79px;top:0;width:1px;height:9.6px;background:#d6d6d6"></div><div class="a" style="left:156.5px;top:0;width:1px;height:9.6px;background:#d6d6d6"></div><div class="t" style="left:81px;top:1.6px;color:#9a9a9a">Independent</div></div>
<div class="row" style="top:426.38px"><div class="t" style="left:4.8px;top:1.6px;color:#1e1e1e">Title on Sheet</div><div class="a" style="left:79px;top:0;width:1px;height:9.6px;background:#d6d6d6"></div><div class="a" style="left:156.5px;top:0;width:1px;height:9.6px;background:#d6d6d6"></div><div class="t" style="left:81px;top:1.6px;color:#1e1e1e"></div></div>
<div class="row hdr" style="top:435.99px"><div class="t" style="left:1.8px;top:1.7px;color:#111">Phasing</div><svg class="a" style="left:156px;top:2.200px" width="4" height="5" viewBox="0 0 4 5"><path d="M0.400 2.300l1.600-1.700 1.600 1.700M0.400 4.500l1.600-1.700 1.600 1.700" fill="none" stroke="#111" stroke-width="0.700"/></svg></div>
<div class="row" style="top:445.59px"><div class="t" style="left:4.8px;top:1.6px;color:#1e1e1e">Phase Filter</div><div class="a" style="left:79px;top:0;width:1px;height:9.6px;background:#d6d6d6"></div><div class="a" style="left:156.5px;top:0;width:1px;height:9.6px;background:#d6d6d6"></div><div class="t" style="left:81px;top:1.6px;color:#1e1e1e">Show All</div></div>
<div class="row" style="top:455.20px"><div class="t" style="left:4.8px;top:1.6px;color:#1e1e1e">Phase</div><div class="a" style="left:79px;top:0;width:1px;height:9.6px;background:#d6d6d6"></div><div class="a" style="left:156.5px;top:0;width:1px;height:9.6px;background:#d6d6d6"></div><div class="t" style="left:81px;top:1.6px;color:#1e1e1e">New Construction</div></div>
<div class="a" style="left:0;top:464.80px;width:164px;height:50.20px;background:#fff"></div>
<div class="t" style="left:2px;top:519.5px;font-size:6.25px;color:#1565c0;text-decoration:underline">Properties help</div>
<div class="a" style="left:123px;top:517.2px;width:39px;height:12px;background:#d9d9d9;border:1px solid #cdcdcd"></div>
<div class="c" style="left:142.5px;top:520px;color:#a5a5a5">Apply</div>
<div class="a" style="left:4.6px;top:309.8px;width:95px;height:15.2px;border:2.8px solid #1272e4;border-radius:4.500px"></div>
<div class="a" style="left:164.6px;top:75px;width:723px;height:11.3px;background:#c0c0c0"></div>
<div class="a" style="left:165.300px;top:75.500px;width:87.200px;height:10.800px;background:#cdcdcd"></div>
<div class="a" style="left:252.5px;top:75.500px;width:69.500px;height:11px;background:#fff"></div>
<svg class="a" style="left:168px;top:77.500px" width="8" height="8" viewBox="0 0 8 8"><path d="M0.800 3.500l2.700-2.500 3.500 2v3.300l-3.700 1.300-2.500-1.500z" fill="#ddd" stroke="#8a8a8a" stroke-width="0.700"/><path d="M0.800 3.500l2.500 1.500 3.700-2M3.300 5v2.600" fill="none" stroke="#8a8a8a" stroke-width="0.600"/></svg>
<div class="t" style="left:180.8px;top:78.8px;color:#4a4a4a;font-size:6.25px">Perspective-Living-01</div>
<svg class="a" style="left:256.500px;top:77.500px" width="8" height="8" viewBox="0 0 8 8"><path d="M0.800 3.500l2.700-2.500 3.500 2v3.300l-3.700 1.300-2.500-1.500z" fill="#eee" stroke="#444" stroke-width="0.700"/><path d="M0.800 3.500l2.500 1.500 3.700-2M3.300 5v2.600" fill="none" stroke="#444" stroke-width="0.600"/></svg>
<div class="t" style="left:268.6px;top:78.8px;font-size:6.4px">{3D}</div>
<svg class="a" style="left:314px;top:79px" width="6" height="6" viewBox="0 0 6 6"><path d="M0.800 0.800l4 4M4.800 0.800l-4 4" stroke="#222" stroke-width="0.900"/></svg>
<svg class="a" style="left:879px;top:78px" width="7" height="6" viewBox="0 0 7 6"><path d="M0.500 0.600h6M0.500 2h6" stroke="#333" stroke-width="0.800"/><path d="M1 3.200h5l-2.500 2.600z" fill="#333"/></svg>
<div class="a" style="left:877.5px;top:86px;width:10px;height:445px;background:#f0f0f0;border-right:1px solid #c4c4c4"></div>
<div class="a" style="left:878.5px;top:299.5px;width:8px;height:12px;background:#cdcdcd"></div>
<svg class="a" style="left:879.500px;top:90px" width="6" height="5" viewBox="0 0 6 5"><path d="M0.800 3.800l2.200-2.400 2.200 2.400" fill="none" stroke="#444" stroke-width="0.900"/></svg>
<svg class="a" style="left:879.500px;top:513.500px" width="6" height="5" viewBox="0 0 6 5"><path d="M0.800 1l2.200 2.400 2.200-2.400" fill="none" stroke="#444" stroke-width="0.900"/></svg>
<div class="a" style="left:166px;top:518.5px;width:711.5px;height:12.5px;background:#f7f7f7;border-top:1px solid #e6e6e6"></div>
<div class="a" style="left:365px;top:522px;width:512.5px;height:9px;background:#f0f0f0"></div>
<div class="a" style="left:610px;top:523.5px;width:10px;height:7px;background:#cdcdcd"></div>
<svg class="a" style="left:869.500px;top:523.500px" width="5" height="6" viewBox="0 0 5 6"><path d="M1 0.800l2.400 2.200-2.400 2.200" fill="none" stroke="#444" stroke-width="0.900"/></svg>
<div class="t" style="left:172.5px;top:521.6px;font-size:5.8px;color:#222">1/8" = 1'-0"</div>
<svg class="a" style="left:207.5px;top:520.300px" width="9" height="8" viewBox="0 0 9 8"><rect x="0.800" y="1.300" width="6.400" height="5.200" rx="1" fill="#fff" stroke="#333" stroke-width="0.800"/><path d="M5.200 5l3 2" stroke="#333" stroke-width="0.900"/></svg>
<svg class="a" style="left:218.7px;top:520.300px" width="9" height="8" viewBox="0 0 9 8"><rect x="0.800" y="1.300" width="6.400" height="5.200" rx="1" fill="#6aa5de" stroke="#2f5f92" stroke-width="0.800"/><path d="M5.200 5l3 2" stroke="#2f5f92" stroke-width="0.900"/></svg>
<svg class="a" style="left:229.9px;top:520.300px" width="9" height="8" viewBox="0 0 9 8"><rect x="0.800" y="1.300" width="6.400" height="5.200" rx="1" fill="#f5c542" stroke="#c0392b" stroke-width="0.800"/><path d="M5.200 5l3 2" stroke="#c0392b" stroke-width="0.900"/></svg>
<svg class="a" style="left:241.1px;top:520.300px" width="9" height="8" viewBox="0 0 9 8"><rect x="0.800" y="1.300" width="6.400" height="5.200" rx="1" fill="#8fb8e0" stroke="#c0392b" stroke-width="0.800"/><path d="M5.200 5l3 2" stroke="#c0392b" stroke-width="0.900"/></svg>
<svg class="a" style="left:252.3px;top:520.300px" width="9" height="8" viewBox="0 0 9 8"><rect x="0.800" y="1.300" width="6.400" height="5.200" rx="1" fill="#b9d3ea" stroke="#778" stroke-width="0.800"/><path d="M5.200 5l3 2" stroke="#778" stroke-width="0.900"/></svg>
<svg class="a" style="left:263.5px;top:520.300px" width="9" height="8" viewBox="0 0 9 8"><rect x="0.800" y="1.300" width="6.400" height="5.200" rx="1" fill="#5b8fd0" stroke="#b03a2e" stroke-width="0.800"/><path d="M5.200 5l3 2" stroke="#b03a2e" stroke-width="0.900"/></svg>
<svg class="a" style="left:274.7px;top:520.300px" width="9" height="8" viewBox="0 0 9 8"><rect x="0.800" y="1.300" width="6.400" height="5.200" rx="1" fill="#5b8fd0" stroke="#557" stroke-width="0.800"/><path d="M5.200 5l3 2" stroke="#557" stroke-width="0.900"/></svg>
<svg class="a" style="left:285.9px;top:520.300px" width="9" height="8" viewBox="0 0 9 8"><rect x="0.800" y="1.300" width="6.400" height="5.200" rx="1" fill="#e4e4e4" stroke="#444" stroke-width="0.800"/><path d="M5.200 5l3 2" stroke="#444" stroke-width="0.900"/></svg>
<svg class="a" style="left:297.1px;top:520.300px" width="9" height="8" viewBox="0 0 9 8"><rect x="0.800" y="1.300" width="6.400" height="5.200" rx="1" fill="#eee" stroke="#555" stroke-width="0.800"/><path d="M5.200 5l3 2" stroke="#555" stroke-width="0.900"/></svg>
<svg class="a" style="left:308.3px;top:520.300px" width="9" height="8" viewBox="0 0 9 8"><rect x="0.800" y="1.300" width="6.400" height="5.200" rx="1" fill="#fff" stroke="#6a8fb5" stroke-width="0.800"/><path d="M5.200 5l3 2" stroke="#6a8fb5" stroke-width="0.900"/></svg>
<svg class="a" style="left:319.5px;top:520.300px" width="9" height="8" viewBox="0 0 9 8"><rect x="0.800" y="1.300" width="6.400" height="5.200" rx="1" fill="#ddd" stroke="#444" stroke-width="0.800"/><path d="M5.200 5l3 2" stroke="#444" stroke-width="0.900"/></svg>
<svg class="a" style="left:330.7px;top:520.300px" width="9" height="8" viewBox="0 0 9 8"><rect x="0.800" y="1.300" width="6.400" height="5.200" rx="1" fill="#bbb" stroke="#444" stroke-width="0.800"/><path d="M5.200 5l3 2" stroke="#444" stroke-width="0.900"/></svg>
<svg class="a" style="left:341.9px;top:520.300px" width="9" height="8" viewBox="0 0 9 8"><rect x="0.800" y="1.300" width="6.400" height="5.200" rx="1" fill="#ccc" stroke="#333" stroke-width="0.800"/><path d="M5.200 5l3 2" stroke="#333" stroke-width="0.900"/></svg>
<div class="t" style="left:355px;top:521px;font-size:6.5px;color:#222">&lt;</div>
<div id="status" class="a" style="top:530.5px;height:12.5px"></div>
<div class="t" style="left:1.5px;top:534px;font-size:6.5px;transform:scaleX(.931);transform-origin:0 0;color:#111">Click to select, TAB for alternates, CTRL adds, SHIFT unselects.</div>
<svg class="a" style="left:478px;top:532.500px" width="9" height="9" viewBox="0 0 9 9"><circle cx="3" cy="5.500" r="2.300" fill="#dff0d0" stroke="#3f8a3a" stroke-width="0.900"/><circle cx="6" cy="5.500" r="2.300" fill="#d6e8fa" stroke="#2f6aa3" stroke-width="0.900"/><path d="M3 3.500v-2.500h2" fill="none" stroke="#2f6aa3" stroke-width="0.800"/></svg>
<div class="a" style="left:492px;top:532.5px;width:109px;height:9.5px;background:#fff;border:1px solid #e2e2e2"></div>
<svg class="a" style="left:594px;top:535.500px" width="5" height="4" viewBox="0 0 5 4"><path d="M0.600 0.800l1.900 2 1.900-2" fill="none" stroke="#9a9a9a" stroke-width="0.700"/></svg>
<svg class="a" style="left:606px;top:533px" width="8" height="8" viewBox="0 0 8 8"><path d="M1.500 1h4l-1.500 3v3" fill="none" stroke="#8a8a8a" stroke-width="1"/><circle cx="5.500" cy="5.500" r="1.200" fill="#777"/></svg>
<svg class="a" style="left:616.5px;top:533px" width="8" height="8" viewBox="0 0 8 8"><path d="M1.500 1h4l-1.500 3v3" fill="none" stroke="#8a8a8a" stroke-width="1"/><circle cx="5.500" cy="5.500" r="1.200" fill="#777"/></svg>
<svg class="a" style="left:634px;top:533.500px" width="8" height="8" viewBox="0 0 8 8"><rect x="0.500" y="0.500" width="6.500" height="6.500" fill="#fff" stroke="#444" stroke-width="0.900"/><path d="M0.500 2.500h6.500M2.500 4h3M2.500 5.500h3" stroke="#444" stroke-width="0.700"/></svg>
<svg class="a" style="left:647px;top:533.500px" width="8" height="8" viewBox="0 0 8 8"><rect x="0.500" y="0.500" width="6.500" height="6.500" fill="#c9c9c9" stroke="#aaa" stroke-width="0.800"/><path d="M2 2h2v4h-2z" fill="#999"/></svg>
<div class="a" style="left:658.500px;top:532.5px;width:110px;height:9.5px;background:#fff;border:1px solid #e2e2e2"></div>
<div class="t" style="left:661px;top:534.2px;color:#8a8a8a">Main Model</div>
<svg class="a" style="left:761.500px;top:535.500px" width="5" height="4" viewBox="0 0 5 4"><path d="M0.600 0.800l1.900 2 1.900-2" fill="none" stroke="#9a9a9a" stroke-width="0.700"/></svg>
<svg class="a" style="left:893px;top:532.500px" width="10" height="10" viewBox="0 0 10 10"><path d="M1 2h6.500l-2.300 3v3.500l-1.800-1v-2.500z" fill="#f2c43a" stroke="#b8860b" stroke-width="0.700"/><path d="M6 5.500l2.500 3" stroke="#444" stroke-width="0.900"/></svg>
<svg class="a" style="left:906px;top:532.500px" width="10" height="10" viewBox="0 0 10 10"><path d="M1 2h6.500l-2.300 3v3.500l-1.800-1v-2.500z" fill="#9ec4e8" stroke="#c0392b" stroke-width="0.700"/><path d="M6 5.500l2.500 3" stroke="#444" stroke-width="0.900"/></svg>
<svg class="a" style="left:920px;top:532.500px" width="10" height="10" viewBox="0 0 10 10"><path d="M1 2h6.500l-2.300 3v3.500l-1.800-1v-2.500z" fill="#f0a050" stroke="#c0392b" stroke-width="0.700"/><path d="M6 5.500l2.500 3" stroke="#444" stroke-width="0.900"/></svg>
<svg class="a" style="left:934px;top:532.500px" width="10" height="10" viewBox="0 0 10 10"><path d="M1 2h6.500l-2.300 3v3.500l-1.800-1v-2.500z" fill="#6aa5de" stroke="#c0392b" stroke-width="0.700"/><path d="M6 5.500l2.500 3" stroke="#444" stroke-width="0.900"/></svg>
<svg class="a" style="left:947px;top:532.500px" width="10" height="10" viewBox="0 0 10 10"><path d="M1 2h6.500l-2.300 3v3.500l-1.800-1v-2.500z" fill="#333" stroke="#333" stroke-width="0.700"/><path d="M6 5.500l2.500 3" stroke="#444" stroke-width="0.900"/></svg>
<svg class="a" style="left:959.500px;top:533.500px" width="8" height="8" viewBox="0 0 8 8"><circle cx="4" cy="4" r="2.600" fill="#d8d8d8" stroke="#b5b5b5" stroke-width="1.200"/></svg>
<svg class="a" style="left:970.500px;top:533px" width="10" height="9" viewBox="0 0 10 9"><path d="M0.800 1h8l-3 3.500v3.500l-2-1v-2.500z" fill="#eee" stroke="#444" stroke-width="0.800"/></svg>
<div class="t" style="left:979.5px;top:535px;font-size:5.500px;color:#222">:0</div>
<div class="a" style="left:888px;top:75px;width:136px;height:456px;background:#fff"></div>
<div class="a" style="left:888px;top:75px;width:136px;height:11px;background:#f0f0f0"></div>
<div class="t" id="pbh" style="left:890.3px;top:78.5px;font-size:6.5px;transform:scaleX(.925);transform-origin:0 0;color:#333">Project Browser - Eames_House_Project_Y...</div>
<svg class="a" style="left:1015.500px;top:78.500px" width="6" height="6" viewBox="0 0 6 6"><path d="M0.800 0.800l4.400 4.400M5.200 0.800l-4.400 4.400" stroke="#222" stroke-width="1"/></svg>
<div class="a" style="left:893.5px;top:94.6px;width:1px;height:208.20px;background:#dadada"></div>
<div class="t" style="left:911.5px;top:88.30px;font-size:6.3px;color:#222">Views (all)</div>
<svg class="a" style="left:891.0px;top:89.10px" width="5" height="5" viewBox="0 0 5 5"><rect x="0.400" y="0.400" width="4.200" height="4.200" fill="#fff" stroke="#9a9a9a" stroke-width="0.600"/><path d="M1.200 2.500h2.600" stroke="#555" stroke-width="0.600"/></svg>
<svg class="a" style="left:900.500px;top:87.60px" width="8" height="8" viewBox="0 0 8 8"><path d="M0.600 2v-1.400h1.400M6 0.600h1.400v1.400M7.400 6v1.400h-1.400M2 7.400h-1.400v-1.400" fill="none" stroke="#333" stroke-width="0.800"/><rect x="2.300" y="2.300" width="3.400" height="3.400" rx="0.800" fill="#fff" stroke="#333" stroke-width="0.700"/></svg>
<div class="t" style="left:913.2px;top:97.90px;font-size:6.3px;color:#222">Floor Plans</div>
<svg class="a" style="left:901.3px;top:98.70px" width="5" height="5" viewBox="0 0 5 5"><rect x="0.400" y="0.400" width="4.200" height="4.200" fill="#fff" stroke="#9a9a9a" stroke-width="0.600"/><path d="M1.200 2.500h2.600" stroke="#555" stroke-width="0.600"/></svg>
<div class="a" style="left:906.5px;top:101.20px;width:5px;height:1px;background:#dadada"></div>
<div class="t" style="left:924px;top:107.50px;font-size:6.3px;color:#222">Level 1</div>
<div class="a" style="left:915px;top:110.80px;width:7px;height:1px;background:#dadada"></div>
<div class="t" style="left:924px;top:117.10px;font-size:6.3px;color:#222">Level 2</div>
<div class="a" style="left:915px;top:120.40px;width:7px;height:1px;background:#dadada"></div>
<div class="t" style="left:924px;top:126.70px;font-size:6.3px;color:#222">Site</div>
<div class="a" style="left:915px;top:130.00px;width:7px;height:1px;background:#dadada"></div>
<div class="t" style="left:913.2px;top:136.30px;font-size:6.3px;color:#222">Ceiling Plans</div>
<svg class="a" style="left:901.3px;top:137.10px" width="5" height="5" viewBox="0 0 5 5"><rect x="0.400" y="0.400" width="4.200" height="4.200" fill="#fff" stroke="#9a9a9a" stroke-width="0.600"/><path d="M1.200 2.500h2.600" stroke="#555" stroke-width="0.600"/></svg>
<div class="a" style="left:906.5px;top:139.60px;width:5px;height:1px;background:#dadada"></div>
<div class="t" style="left:924px;top:145.90px;font-size:6.3px;color:#222">Level 1</div>
<div class="a" style="left:915px;top:149.20px;width:7px;height:1px;background:#dadada"></div>
<div class="t" style="left:924px;top:155.50px;font-size:6.3px;color:#222">Level 2</div>
<div class="a" style="left:915px;top:158.80px;width:7px;height:1px;background:#dadada"></div>
<div class="t" style="left:913.2px;top:165.10px;font-size:6.3px;color:#222">3D Views</div>
<svg class="a" style="left:901.3px;top:165.90px" width="5" height="5" viewBox="0 0 5 5"><rect x="0.400" y="0.400" width="4.200" height="4.200" fill="#fff" stroke="#9a9a9a" stroke-width="0.600"/><path d="M1.200 2.500h2.600" stroke="#555" stroke-width="0.600"/></svg>
<div class="a" style="left:906.5px;top:168.40px;width:5px;height:1px;background:#dadada"></div>
<div class="t" style="left:924px;top:174.70px;font-size:6.3px;color:#222">ISO-view-01</div>
<div class="a" style="left:915px;top:178.00px;width:7px;height:1px;background:#dadada"></div>
<div class="t" style="left:924px;top:184.30px;font-size:6.3px;color:#222">Perspective-Living-01</div>
<div class="a" style="left:915px;top:187.60px;width:7px;height:1px;background:#dadada"></div>
<div class="t" style="left:924px;top:193.90px;font-size:6.3px;color:#222;font-weight:bold">{3D}</div>
<div class="a" style="left:915px;top:197.20px;width:7px;height:1px;background:#dadada"></div>
<div class="t" style="left:913.2px;top:203.50px;font-size:6.3px;color:#222">Elevations (Building Elevation)</div>
<svg class="a" style="left:901.3px;top:204.30px" width="5" height="5" viewBox="0 0 5 5"><rect x="0.400" y="0.400" width="4.200" height="4.200" fill="#fff" stroke="#9a9a9a" stroke-width="0.600"/><path d="M1.200 2.500h2.600" stroke="#555" stroke-width="0.600"/></svg>
<div class="a" style="left:906.5px;top:206.80px;width:5px;height:1px;background:#dadada"></div>
<div class="t" style="left:924px;top:213.10px;font-size:6.3px;color:#222">East</div>
<div class="a" style="left:915px;top:216.40px;width:7px;height:1px;background:#dadada"></div>
<div class="t" style="left:924px;top:222.70px;font-size:6.3px;color:#222">North</div>
<div class="a" style="left:915px;top:226.00px;width:7px;height:1px;background:#dadada"></div>
<div class="t" style="left:924px;top:232.30px;font-size:6.3px;color:#222">South</div>
<div class="a" style="left:915px;top:235.60px;width:7px;height:1px;background:#dadada"></div>
<div class="t" style="left:924px;top:241.90px;font-size:6.3px;color:#222">West</div>
<div class="a" style="left:915px;top:245.20px;width:7px;height:1px;background:#dadada"></div>
<div class="t" style="left:911.5px;top:251.50px;font-size:6.3px;color:#222">Legends</div>
<div class="a" style="left:894px;top:254.80px;width:6px;height:1px;background:#dadada"></div>
<svg class="a" style="left:899.500px;top:250.80px" width="9" height="8" viewBox="0 0 9 8"><rect x="0.400" y="0.400" width="8.200" height="7.200" fill="#8d9197" stroke="#6a6e75" stroke-width="0.600"/><rect x="1.200" y="1.200" width="3" height="2.600" fill="#e8eaee"/><rect x="5" y="1.200" width="2.800" height="1" fill="#dfe2e6"/><path d="M1.200 5h3M5 3.300l2.600-1.500M5 5.800h2.800" stroke="#eceef1" stroke-width="0.700"/></svg>
<div class="t" style="left:911.5px;top:261.10px;font-size:6.3px;color:#222">Schedules/Quantities (all)</div>
<div class="a" style="left:894px;top:264.40px;width:6px;height:1px;background:#dadada"></div>
<svg class="a" style="left:899.500px;top:260.90px" width="9" height="7" viewBox="0 0 9 7"><rect x="0.400" y="0.400" width="8.200" height="6.200" fill="#c9ccd1" stroke="#62666d" stroke-width="0.700"/><rect x="0.700" y="0.700" width="7.600" height="2" fill="#62666d"/><path d="M3.200 2.700v3.800M6 2.700v3.800M0.500 4.700h8" stroke="#7d8188" stroke-width="0.500"/></svg>
<div class="t" style="left:911.5px;top:270.70px;font-size:6.3px;color:#222">Sheets (all)</div>
<div class="a" style="left:894px;top:274.00px;width:6px;height:1px;background:#dadada"></div>
<svg class="a" style="left:899.500px;top:270.00px" width="9" height="8" viewBox="0 0 9 8"><path d="M0.400 0.400h6.500l1.700 1.700v5.500h-8.200z" fill="#a4a8ae" stroke="#62666d" stroke-width="0.600"/><rect x="1.300" y="3" width="3" height="3.400" fill="#e8eaee"/><rect x="5.200" y="3.600" width="2.400" height="2.800" fill="#e8eaee"/></svg>
<div class="t" style="left:911.5px;top:280.30px;font-size:6.3px;color:#222">Families</div>
<svg class="a" style="left:891.0px;top:281.10px" width="5" height="5" viewBox="0 0 5 5"><rect x="0.400" y="0.400" width="4.200" height="4.200" fill="#fff" stroke="#9a9a9a" stroke-width="0.600"/><path d="M1.200 2.500h2.600" stroke="#555" stroke-width="0.600"/><path d="M2.500 1.200v2.600" stroke="#555" stroke-width="0.600"/></svg>
<svg class="a" style="left:900px;top:279.60px" width="8" height="8" viewBox="0 0 8 8"><rect x="0.500" y="0.500" width="7" height="7" fill="#fff" stroke="#444" stroke-width="0.700"/><circle cx="4" cy="2.800" r="1.100" fill="none" stroke="#444" stroke-width="0.600"/><path d="M2 6.500c0-2 4-2 4 0" fill="none" stroke="#444" stroke-width="0.600"/></svg>
<div class="t" style="left:911.5px;top:289.90px;font-size:6.3px;color:#222">Groups</div>
<svg class="a" style="left:891.0px;top:290.70px" width="5" height="5" viewBox="0 0 5 5"><rect x="0.400" y="0.400" width="4.200" height="4.200" fill="#fff" stroke="#9a9a9a" stroke-width="0.600"/><path d="M1.200 2.500h2.600" stroke="#555" stroke-width="0.600"/><path d="M2.500 1.200v2.600" stroke="#555" stroke-width="0.600"/></svg>
<svg class="a" style="left:900px;top:289.20px" width="8" height="8" viewBox="0 0 8 8"><path d="M2 0.500h-1.500v7h1.500M6 0.500h1.500v7h-1.500" fill="none" stroke="#444" stroke-width="0.700"/><circle cx="3.500" cy="3.300" r="1.500" fill="none" stroke="#444" stroke-width="0.600"/><rect x="3.500" y="3.800" width="2.500" height="2.500" fill="#eee" stroke="#444" stroke-width="0.600"/></svg>
<div class="t" style="left:911.5px;top:299.50px;font-size:6.3px;color:#222">Revit Links</div>
<div class="a" style="left:894px;top:302.80px;width:6px;height:1px;background:#dadada"></div>
<svg class="a" style="left:899.500px;top:300.30px" width="9" height="5" viewBox="0 0 9 5"><rect x="0.300" y="0.700" width="5" height="3.600" rx="1.800" fill="#e2ab22" stroke="#c18c10" stroke-width="0.500"/><rect x="3.700" y="0.700" width="5" height="3.600" rx="1.800" fill="#e2ab22" stroke="#c18c10" stroke-width="0.500"/><rect x="1.700" y="2" width="2" height="1" rx="0.500" fill="#fff6d8"/><rect x="5.300" y="2" width="2" height="1" rx="0.500" fill="#fff6d8"/></svg>
<div class="a" style="left:914.5px;top:104.20px;width:1px;height:25.80px;background:#dadada"></div>
<div class="a" style="left:914.5px;top:142.60px;width:1px;height:16.20px;background:#dadada"></div>
<div class="a" style="left:914.5px;top:171.40px;width:1px;height:25.80px;background:#dadada"></div>
<div class="a" style="left:914.5px;top:209.80px;width:1px;height:35.40px;background:#dadada"></div>
<div class="a" style="left:903.8px;top:94.60px;width:1px;height:110.20px;background:#dadada"></div>
<div class="a" style="left:919px;top:190.6px;width:24.6px;height:12.4px;border:2.5px solid #1272e4;border-radius:4px"></div>
<svg class="a" style="left:788px;top:108px;will-change:transform" width="82" height="72" viewBox="788 108 82 72">
<ellipse cx="828.5" cy="151.700" rx="34.800" ry="20.900" fill="#f1f1f1" stroke="#dcdcdc" stroke-width="0.700"/>
<ellipse cx="828.5" cy="150.500" rx="27" ry="15" fill="#fdfdfd" stroke="#e2e2e2" stroke-width="0.700"/>
<ellipse cx="830" cy="153.500" rx="19" ry="8" fill="#ececec"/>
<path d="M810.200 125L828.500 116L847.200 124.300L828.500 135.300Z" fill="#f0f0f0" stroke="#8a8a8a" stroke-width="0.600"/>
<path d="M810.200 125L828.500 135.300L828.500 156.500L811 147.500Z" fill="#e3e3e3" stroke="#8a8a8a" stroke-width="0.600"/>
<path d="M828.500 135.300L847.200 124.300L846 146.200L828.500 156.500Z" fill="#dcdcdc" stroke="#8a8a8a" stroke-width="0.600"/>
<text x="0" y="0" font-size="3.600" font-weight="bold" fill="#666" text-anchor="middle" font-family="Liberation Sans, sans-serif" transform="translate(829 127) rotate(-28)">TOP</text>
<text x="0" y="0" font-size="4" font-weight="bold" fill="#666" text-anchor="middle" font-family="Liberation Sans, sans-serif" transform="translate(819.800 143) skewY(28)">LEFT</text>
<text x="0" y="0" font-size="4" font-weight="bold" fill="#666" text-anchor="middle" font-family="Liberation Sans, sans-serif" transform="translate(837.500 144.500) skewY(-30)">FRONT</text>
<g fill="#ececec" stroke="#b0b0b0" stroke-width="0.500"><circle cx="802.500" cy="137" r="2"/><circle cx="810" cy="166" r="2.400"/><circle cx="857.500" cy="157.500" r="2.400"/></g>
</svg>
<svg class="a" style="left:855px;top:176px" width="25" height="70" viewBox="855 176 25 70">
<rect x="857.500" y="178.500" width="19.500" height="63.500" rx="2.500" fill="#f3f3f3" stroke="#b4b4b4" stroke-width="0.800"/>
<circle cx="872.500" cy="182.500" r="1.500" fill="#ddd" stroke="#999" stroke-width="0.500"/><circle cx="872.500" cy="237.500" r="1.500" fill="#ddd" stroke="#999" stroke-width="0.500"/>
<circle cx="865.500" cy="195.500" r="4.200" fill="#f8f8f8" stroke="#8a8a8a" stroke-width="0.900"/><circle cx="865.500" cy="195.500" r="2.200" fill="#fff" stroke="#aaa" stroke-width="0.600"/>
<rect x="867.500" y="196.500" width="5.500" height="5.500" rx="1" fill="#5a9ee0" stroke="#2f6aa3" stroke-width="0.600"/>
<path d="M864.300 206.500h2.400l-1.200 1.400z" fill="#444"/>
<path d="M858.500 210.500h17.500" stroke="#d0d0d0" stroke-width="0.600"/>
<rect x="862.500" y="214.500" width="5" height="5" fill="#9cc47a" stroke="#5f8a3f" stroke-width="0.600"/><circle cx="868.500" cy="220.500" r="1.600" fill="#fff" stroke="#666" stroke-width="0.600"/><path d="M869.700 221.700l1.500 1.500" stroke="#666" stroke-width="0.700"/>
<path d="M864.300 228h2.400l-1.200 1.400z" fill="#444"/>
</svg>
<svg class="a" style="left:166px;top:87px" width="711" height="431" viewBox="166 87 711 431"><defs><clipPath id="tc"><path d="M486.6 132.0 L490.3 134.4 L494.0 136.9 L497.8 139.3 L501.5 141.8 L505.2 144.2 L508.9 146.6 L512.6 148.9 L516.4 150.9 L520.1 152.9 L523.8 154.9 L527.5 156.9 L531.3 158.9 L535.0 161.1 L538.7 163.8 L542.4 166.6 L546.1 169.3 L549.9 172.1 L553.6 174.7 L557.3 176.9 L561.0 179.0 L564.7 181.2 L568.5 183.4 L572.2 186.2 L575.9 189.2 L579.6 192.1 L583.4 195.1 L587.1 198.1 L590.8 201.0 L594.5 203.8 L598.2 206.7 L602.0 209.5 L605.7 212.6 L609.4 215.7 L613.1 218.8 L616.8 221.9 L620.6 225.0 L624.3 228.1 L628.0 231.5 L631.7 235.1 L635.5 238.7 L639.2 242.3 L642.9 245.9 L646.6 249.5 L650.3 252.8 L654.1 255.2 L657.8 257.7 L661.5 260.2 L665.2 262.7 L668.9 265.2 L672.7 267.6 L676.4 270.1 L680.1 272.6 L683.8 275.1 L687.5 277.4 L691.3 279.7 L695.0 282.0 L698.7 284.3 L702.4 286.6 L706.2 289.4 L709.9 292.3 L713.6 295.1 L717.3 297.9 L721.0 300.7 L724.8 303.7 L728.5 306.7 L732.2 309.6 L735.9 312.6 L739.6 315.6 L743.4 318.6 L747.1 321.1 L750.8 323.5 L754.5 325.9 L758.3 328.4 L762.0 330.8 L765.7 333.2 L769.4 335.6 L773.1 338.0 L776.9 340.5 L780.6 342.9 L784.3 345.3 L782.1 347.2 L779.9 348.8 L777.7 350.5 L775.5 352.1 L773.3 353.8 L771.1 355.5 L768.9 357.1 L766.7 358.8 L764.5 360.5 L762.3 362.4 L760.1 364.4 L757.9 366.4 L755.7 368.5 L753.5 370.5 L751.3 372.5 L749.1 374.6 L746.9 376.6 L744.7 378.5 L742.5 380.4 L740.3 382.2 L738.1 384.1 L735.9 386.0 L733.7 387.8 L731.5 389.3 L729.3 390.6 L727.1 392.0 L724.9 393.4 L722.7 394.7 L720.5 396.1 L718.3 397.5 L716.1 398.8 L713.9 400.4 L711.7 402.1 L709.5 403.7 L707.3 405.4 L705.1 407.1 L702.9 408.7 L700.7 410.4 L698.5 412.1 L696.2 413.6 L694.0 415.1 L691.8 416.6 L689.6 418.1 L687.4 419.6 L685.2 421.1 L683.0 422.6 L680.8 424.1 L678.6 425.4 L676.4 426.7 L674.2 427.9 L672.0 429.2 L669.8 430.5 L667.6 431.7 L665.4 433.0 L663.2 434.2 L661.0 435.4 L658.8 436.4 L656.6 437.5 L654.4 438.6 L652.2 439.7 L650.0 440.8 L647.8 442.2 L645.6 443.6 L643.4 445.0 L641.2 446.4 L639.0 447.8 L636.8 449.2 L634.6 450.6 L632.4 451.9 L630.2 453.3 L628.0 454.7 L625.8 456.1 L623.6 457.5 L621.4 458.9 L619.2 460.2 L617.0 461.6 L614.8 463.0 L612.6 464.4 L610.4 465.7 L608.2 467.1 L604.5 465.1 L600.8 463.1 L597.0 461.1 L593.3 459.1 L589.6 457.2 L585.9 455.4 L582.2 453.5 L578.4 451.7 L574.7 449.9 L571.0 448.1 L567.3 446.4 L563.5 444.7 L559.8 443.1 L556.1 441.4 L552.4 439.7 L548.7 437.8 L544.9 435.7 L541.2 433.5 L537.5 431.4 L533.8 428.7 L530.1 425.9 L526.3 423.1 L522.6 419.4 L518.9 415.2 L515.2 411.3 L511.4 407.6 L507.7 403.9 L504.0 400.2 L500.3 396.3 L496.6 392.2 L492.8 388.2 L489.1 384.0 L485.4 379.8 L481.7 375.5 L478.0 371.3 L474.2 367.0 L470.5 362.8 L466.8 359.9 L463.1 357.0 L459.4 354.1 L455.6 351.3 L451.9 348.4 L448.2 345.7 L444.5 343.1 L440.7 340.5 L437.0 337.9 L433.3 335.3 L429.6 332.7 L425.9 330.1 L422.1 327.9 L418.4 325.6 L414.7 323.4 L411.0 321.2 L407.3 319.0 L403.5 316.8 L399.8 314.6 L396.1 312.7 L392.4 310.9 L388.6 309.1 L384.9 307.2 L381.2 305.4 L377.5 303.5 L373.8 302.1 L370.0 301.4 L366.3 300.6 L362.6 299.9 L358.9 299.2 L355.2 298.4 L351.4 297.7 L347.7 297.2 L344.0 296.8 L340.3 296.5 L336.5 296.1 L332.8 295.7 L329.1 295.4 L325.4 295.0 L321.7 294.3 L317.9 293.5 L314.2 292.8 L310.5 292.0 L312.7 288.2 L314.9 284.4 L317.1 280.6 L319.3 276.8 L321.5 273.8 L323.7 271.2 L325.9 268.6 L328.1 266.0 L330.3 263.4 L332.5 260.9 L334.7 258.3 L336.9 254.3 L339.1 250.2 L341.3 246.2 L343.5 242.8 L345.7 239.4 L347.9 236.0 L350.1 232.6 L352.3 229.4 L354.5 226.3 L356.7 223.2 L358.9 220.0 L361.1 217.5 L363.3 214.9 L365.5 212.4 L367.7 210.0 L369.9 207.7 L372.1 205.4 L374.3 203.0 L376.5 200.7 L378.7 199.3 L380.9 197.8 L383.1 196.4 L385.3 194.9 L387.5 193.5 L389.7 192.0 L391.9 190.6 L394.1 189.2 L396.3 187.7 L398.6 186.3 L400.8 184.8 L403.0 183.7 L405.2 182.5 L407.4 181.3 L409.6 180.1 L411.8 178.9 L414.0 177.7 L416.2 176.5 L418.4 175.3 L420.6 174.1 L422.8 173.0 L425.0 171.8 L427.2 170.6 L429.4 169.4 L431.6 168.0 L433.8 166.5 L436.0 164.9 L438.2 163.4 L440.4 161.8 L442.6 160.2 L444.8 158.7 L447.0 157.1 L449.2 155.6 L451.4 154.0 L453.6 152.5 L455.8 151.0 L458.0 149.6 L460.2 148.1 L462.4 146.6 L464.6 145.1 L466.8 143.6 L469.0 142.1 L471.2 140.6 L473.4 139.1 L475.6 137.6 L477.8 136.5 L480.0 135.4 L482.2 134.2 L484.4 133.1Z"/></clipPath><linearGradient id="sl" gradientUnits="userSpaceOnUse" x1="332" y1="250" x2="436" y2="312"><stop offset="0" stop-color="#4f672e" stop-opacity="1"/><stop offset=".3" stop-color="#5f7a37" stop-opacity="1"/><stop offset=".6" stop-color="#74903f" stop-opacity=".85"/><stop offset="1" stop-color="#8ba34f" stop-opacity="0"/></linearGradient><radialGradient id="rg" gradientUnits="userSpaceOnUse" cx="312" cy="296" r="120"><stop offset="0" stop-color="#2c3d18" stop-opacity=".8"/><stop offset=".5" stop-color="#34481c" stop-opacity=".45"/><stop offset="1" stop-color="#3f5424" stop-opacity="0"/></radialGradient><clipPath id="sc"><path d="M384 190L372 203L349 233L334 258L320 273L304 296L350 302L400 320L440 345L436 300L418 262L400 225L390 200Z"/></clipPath><filter id="bl" x="-20%" y="-20%" width="140%" height="140%"><feGaussianBlur stdDeviation="3"/></filter></defs><path d="M310.5 308.0 L310.5 292.0 L314.2 292.8 L317.9 293.5 L321.7 294.3 L325.4 295.0 L329.1 295.4 L332.8 295.7 L336.5 296.1 L340.3 296.5 L344.0 296.8 L347.7 297.2 L351.4 297.7 L355.2 298.4 L358.9 299.2 L362.6 299.9 L366.3 300.6 L370.0 301.4 L373.8 302.1 L377.5 303.5 L381.2 305.4 L384.9 307.2 L388.6 309.1 L392.4 310.9 L396.1 312.7 L399.8 314.6 L403.5 316.8 L407.3 319.0 L411.0 321.2 L414.7 323.4 L418.4 325.6 L422.1 327.9 L425.9 330.1 L429.6 332.7 L433.3 335.3 L437.0 337.9 L440.7 340.5 L444.5 343.1 L448.2 345.7 L451.9 348.4 L455.6 351.3 L459.4 354.1 L463.1 357.0 L466.8 359.9 L470.5 362.8 L474.2 367.0 L478.0 371.3 L481.7 375.5 L485.4 379.8 L489.1 384.0 L492.8 388.2 L496.6 392.2 L500.3 396.3 L504.0 400.2 L507.7 403.9 L511.4 407.6 L515.2 411.3 L518.9 415.2 L522.6 419.4 L526.3 423.1 L530.1 425.9 L533.8 428.7 L537.5 431.4 L541.2 433.5 L544.9 435.7 L548.7 437.8 L552.4 439.7 L556.1 441.4 L559.8 443.1 L563.5 444.7 L567.3 446.4 L571.0 448.1 L574.7 449.9 L578.4 451.7 L582.2 453.5 L585.9 455.4 L589.6 457.2 L593.3 459.1 L597.0 461.1 L600.8 463.1 L604.5 465.1 L608.2 467.1 L608.2 478.8Z" fill="#1b100a"/><path d="M784.3 377.8 L784.3 345.5 L782.1 347.2 L779.9 348.8 L777.7 350.5 L775.5 352.1 L773.3 353.8 L771.1 355.5 L768.9 357.1 L766.7 358.8 L764.5 360.5 L762.3 362.4 L760.1 364.4 L757.9 366.4 L755.7 368.5 L753.5 370.5 L751.3 372.5 L749.1 374.6 L746.9 376.6 L744.7 378.5 L742.5 380.4 L740.3 382.2 L738.1 384.1 L735.9 386.0 L733.7 387.8 L731.5 389.3 L729.3 390.6 L727.1 392.0 L724.9 393.4 L722.7 394.7 L720.5 396.1 L718.3 397.5 L716.1 398.8 L713.9 400.4 L711.7 402.1 L709.5 403.7 L707.3 405.4 L705.1 407.1 L702.9 408.7 L700.7 410.4 L698.5 412.1 L696.2 413.6 L694.0 415.1 L691.8 416.6 L689.6 418.1 L687.4 419.6 L685.2 421.1 L683.0 422.6 L680.8 424.1 L678.6 425.4 L676.4 426.7 L674.2 427.9 L672.0 429.2 L669.8 430.5 L667.6 431.7 L665.4 433.0 L663.2 434.2 L661.0 435.4 L658.8 436.4 L656.6 437.5 L654.4 438.6 L652.2 439.7 L650.0 440.8 L647.8 442.2 L645.6 443.6 L643.4 445.0 L641.2 446.4 L639.0 447.8 L636.8 449.2 L634.6 450.6 L632.4 451.9 L630.2 453.3 L628.0 454.7 L625.8 456.1 L623.6 457.5 L621.4 458.9 L619.2 460.2 L617.0 461.6 L614.8 463.0 L612.6 464.4 L610.4 465.7 L608.2 467.1 L608.2 478.8Z" fill="#3a2215"/><path d="M486.6 132.0 L490.3 134.4 L494.0 136.9 L497.8 139.3 L501.5 141.8 L505.2 144.2 L508.9 146.6 L512.6 148.9 L516.4 150.9 L520.1 152.9 L523.8 154.9 L527.5 156.9 L531.3 158.9 L535.0 161.1 L538.7 163.8 L542.4 166.6 L546.1 169.3 L549.9 172.1 L553.6 174.7 L557.3 176.9 L561.0 179.0 L564.7 181.2 L568.5 183.4 L572.2 186.2 L575.9 189.2 L579.6 192.1 L583.4 195.1 L587.1 198.1 L590.8 201.0 L594.5 203.8 L598.2 206.7 L602.0 209.5 L605.7 212.6 L609.4 215.7 L613.1 218.8 L616.8 221.9 L620.6 225.0 L624.3 228.1 L628.0 231.5 L631.7 235.1 L635.5 238.7 L639.2 242.3 L642.9 245.9 L646.6 249.5 L650.3 252.8 L654.1 255.2 L657.8 257.7 L661.5 260.2 L665.2 262.7 L668.9 265.2 L672.7 267.6 L676.4 270.1 L680.1 272.6 L683.8 275.1 L687.5 277.4 L691.3 279.7 L695.0 282.0 L698.7 284.3 L702.4 286.6 L706.2 289.4 L709.9 292.3 L713.6 295.1 L717.3 297.9 L721.0 300.7 L724.8 303.7 L728.5 306.7 L732.2 309.6 L735.9 312.6 L739.6 315.6 L743.4 318.6 L747.1 321.1 L750.8 323.5 L754.5 325.9 L758.3 328.4 L762.0 330.8 L765.7 333.2 L769.4 335.6 L773.1 338.0 L776.9 340.5 L780.6 342.9 L784.3 345.3 L782.1 347.2 L779.9 348.8 L777.7 350.5 L775.5 352.1 L773.3 353.8 L771.1 355.5 L768.9 357.1 L766.7 358.8 L764.5 360.5 L762.3 362.4 L760.1 364.4 L757.9 366.4 L755.7 368.5 L753.5 370.5 L751.3 372.5 L749.1 374.6 L746.9 376.6 L744.7 378.5 L742.5 380.4 L740.3 382.2 L738.1 384.1 L735.9 386.0 L733.7 387.8 L731.5 389.3 L729.3 390.6 L727.1 392.0 L724.9 393.4 L722.7 394.7 L720.5 396.1 L718.3 397.5 L716.1 398.8 L713.9 400.4 L711.7 402.1 L709.5 403.7 L707.3 405.4 L705.1 407.1 L702.9 408.7 L700.7 410.4 L698.5 412.1 L696.2 413.6 L694.0 415.1 L691.8 416.6 L689.6 418.1 L687.4 419.6 L685.2 421.1 L683.0 422.6 L680.8 424.1 L678.6 425.4 L676.4 426.7 L674.2 427.9 L672.0 429.2 L669.8 430.5 L667.6 431.7 L665.4 433.0 L663.2 434.2 L661.0 435.4 L658.8 436.4 L656.6 437.5 L654.4 438.6 L652.2 439.7 L650.0 440.8 L647.8 442.2 L645.6 443.6 L643.4 445.0 L641.2 446.4 L639.0 447.8 L636.8 449.2 L634.6 450.6 L632.4 451.9 L630.2 453.3 L628.0 454.7 L625.8 456.1 L623.6 457.5 L621.4 458.9 L619.2 460.2 L617.0 461.6 L614.8 463.0 L612.6 464.4 L610.4 465.7 L608.2 467.1 L604.5 465.1 L600.8 463.1 L597.0 461.1 L593.3 459.1 L589.6 457.2 L585.9 455.4 L582.2 453.5 L578.4 451.7 L574.7 449.9 L571.0 448.1 L567.3 446.4 L563.5 444.7 L559.8 443.1 L556.1 441.4 L552.4 439.7 L548.7 437.8 L544.9 435.7 L541.2 433.5 L537.5 431.4 L533.8 428.7 L530.1 425.9 L526.3 423.1 L522.6 419.4 L518.9 415.2 L515.2 411.3 L511.4 407.6 L507.7 403.9 L504.0 400.2 L500.3 396.3 L496.6 392.2 L492.8 388.2 L489.1 384.0 L485.4 379.8 L481.7 375.5 L478.0 371.3 L474.2 367.0 L470.5 362.8 L466.8 359.9 L463.1 357.0 L459.4 354.1 L455.6 351.3 L451.9 348.4 L448.2 345.7 L444.5 343.1 L440.7 340.5 L437.0 337.9 L433.3 335.3 L429.6 332.7 L425.9 330.1 L422.1 327.9 L418.4 325.6 L414.7 323.4 L411.0 321.2 L407.3 319.0 L403.5 316.8 L399.8 314.6 L396.1 312.7 L392.4 310.9 L388.6 309.1 L384.9 307.2 L381.2 305.4 L377.5 303.5 L373.8 302.1 L370.0 301.4 L366.3 300.6 L362.6 299.9 L358.9 299.2 L355.2 298.4 L351.4 297.7 L347.7 297.2 L344.0 296.8 L340.3 296.5 L336.5 296.1 L332.8 295.7 L329.1 295.4 L325.4 295.0 L321.7 294.3 L317.9 293.5 L314.2 292.8 L310.5 292.0 L312.7 288.2 L314.9 284.4 L317.1 280.6 L319.3 276.8 L321.5 273.8 L323.7 271.2 L325.9 268.6 L328.1 266.0 L330.3 263.4 L332.5 260.9 L334.7 258.3 L336.9 254.3 L339.1 250.2 L341.3 246.2 L343.5 242.8 L345.7 239.4 L347.9 236.0 L350.1 232.6 L352.3 229.4 L354.5 226.3 L356.7 223.2 L358.9 220.0 L361.1 217.5 L363.3 214.9 L365.5 212.4 L367.7 210.0 L369.9 207.7 L372.1 205.4 L374.3 203.0 L376.5 200.7 L378.7 199.3 L380.9 197.8 L383.1 196.4 L385.3 194.9 L387.5 193.5 L389.7 192.0 L391.9 190.6 L394.1 189.2 L396.3 187.7 L398.6 186.3 L400.8 184.8 L403.0 183.7 L405.2 182.5 L407.4 181.3 L409.6 180.1 L411.8 178.9 L414.0 177.7 L416.2 176.5 L418.4 175.3 L420.6 174.1 L422.8 173.0 L425.0 171.8 L427.2 170.6 L429.4 169.4 L431.6 168.0 L433.8 166.5 L436.0 164.9 L438.2 163.4 L440.4 161.8 L442.6 160.2 L444.8 158.7 L447.0 157.1 L449.2 155.6 L451.4 154.0 L453.6 152.5 L455.8 151.0 L458.0 149.6 L460.2 148.1 L462.4 146.6 L464.6 145.1 L466.8 143.6 L469.0 142.1 L471.2 140.6 L473.4 139.1 L475.6 137.6 L477.8 136.5 L480.0 135.4 L482.2 134.2 L484.4 133.1Z" fill="#8ba34f" stroke="#2c3612" stroke-width="0.4"/><g clip-path="url(#tc)"><path d="M384 190L372 203L349 233L334 258L320 273L304 296L350 302L400 320L470 372L478 330L452 270L420 215L398 194Z" fill="url(#sl)" filter="url(#bl)"/><path d="M384 190L372 203L349 233L334 258L320 273L304 296L350 302L400 320L470 372L478 330L452 270L420 215L398 194Z" fill="url(#rg)" filter="url(#bl)"/><path d="M540.0 146.0C534.9 145.9 526.3 153.3 521.4 155.4C516.5 157.5 514.5 156.6 510.8 158.3C507.1 160.0 503.0 163.7 499.0 165.4C495.0 167.1 490.9 167.9 487.0 168.4C483.1 168.9 479.3 168.7 475.4 168.4C471.5 168.1 467.5 167.5 463.6 166.6C459.7 165.7 455.2 164.2 451.8 163.0C448.4 161.8 446.1 161.3 443.5 159.5C440.9 157.7 440.2 150.2 436.0 152.0C431.8 153.8 419.4 166.0 418.0 170.0C416.6 174.0 425.7 173.1 427.5 176.0C429.3 178.9 428.6 182.7 428.7 187.5C428.8 192.3 427.4 199.2 428.2 205.0C429.0 210.8 430.5 217.5 433.7 222.5C436.9 227.5 441.4 231.1 447.5 235.0C453.6 238.9 461.2 242.9 470.0 246.0C478.8 249.1 490.8 252.4 500.0 253.7C509.2 255.0 516.7 255.0 525.0 253.7C533.3 252.4 540.8 249.6 550.0 246.0C559.2 242.4 569.3 236.0 580.0 232.0C590.7 228.0 604.8 224.3 614.0 222.0C623.2 219.7 633.2 222.3 635.0 218.0C636.8 213.7 630.8 197.1 625.0 196.0C619.2 194.9 608.3 207.2 600.0 211.5C591.7 215.8 582.4 218.3 575.0 222.0C567.6 225.7 561.8 230.5 555.5 233.7C549.2 236.9 544.7 239.1 537.5 241.0C530.3 242.9 520.4 244.8 512.5 245.0C504.6 245.2 497.1 244.2 490.0 242.5C482.9 240.8 476.7 238.8 470.0 235.0C463.3 231.2 454.6 224.6 450.0 220.0C445.4 215.4 443.2 211.2 442.5 207.5C441.8 203.8 443.9 200.9 446.0 198.0C448.1 195.1 450.2 193.2 455.0 190.0C459.8 186.8 467.3 181.2 475.0 178.5C482.7 175.8 495.3 175.4 501.3 174.0C507.3 172.6 507.3 171.4 510.8 170.0C514.3 168.6 518.8 166.8 522.5 165.4C526.2 164.1 528.3 163.5 533.2 161.9C538.1 160.3 550.9 158.7 552.0 156.0C553.1 153.3 545.1 146.1 540.0 146.0Z" fill="#3c2417"/><path d="M700.0 262.0C694.5 260.0 678.9 266.0 672.0 267.0C665.1 268.0 664.1 268.1 658.6 268.0C653.1 267.9 645.5 267.6 639.0 266.4C632.5 265.1 624.8 262.2 619.5 260.5C614.2 258.8 610.7 257.2 607.0 256.0C603.3 254.8 600.3 253.5 597.5 253.0C594.7 252.5 592.5 252.7 590.0 253.0C587.5 253.3 585.3 253.9 582.5 255.0C579.7 256.1 575.9 258.0 573.0 259.5C570.1 261.0 567.2 262.7 565.0 264.0C562.8 265.3 560.3 266.6 560.0 267.5C559.7 268.4 560.9 269.8 563.0 269.5C565.1 269.2 569.5 267.3 572.5 266.0C575.5 264.7 578.1 262.7 581.0 261.5C583.9 260.3 587.0 259.4 590.0 259.0C593.0 258.6 596.1 258.7 599.0 259.0C601.9 259.3 604.1 259.9 607.5 261.0C610.9 262.1 614.2 263.5 619.5 265.4C624.8 267.3 632.5 270.5 639.0 272.3C645.5 274.1 651.1 275.4 658.6 276.0C666.1 276.6 676.3 275.5 684.0 276.0C691.7 276.5 702.3 281.3 705.0 279.0C707.7 276.7 705.5 264.0 700.0 262.0Z" fill="#3c2417"/><path d="M760.0 300.0C754.5 301.3 746.6 314.3 742.0 319.6C737.4 324.9 736.3 328.3 732.4 331.9C728.5 335.5 725.6 338.4 718.8 341.4C712.0 344.3 700.5 347.3 691.4 349.6C682.3 351.9 673.1 353.2 664.0 355.0C654.9 356.8 645.6 358.5 636.5 360.6C627.4 362.7 618.5 365.3 609.4 367.4C600.3 369.4 591.1 371.1 582.0 372.9C572.9 374.7 563.8 375.9 554.7 378.4C545.6 380.9 535.5 384.6 527.3 388.0C519.1 391.4 511.7 395.6 505.5 398.9C499.3 402.2 489.6 404.1 490.0 408.0C490.4 411.9 503.6 421.5 508.0 422.0C512.4 422.5 512.3 414.7 516.4 411.0C520.5 407.3 526.4 403.2 532.8 400.0C539.2 396.8 546.5 394.5 554.7 392.0C562.9 389.5 572.9 386.9 582.0 385.2C591.1 383.5 600.3 383.2 609.4 381.6C618.5 380.0 627.6 377.4 636.7 375.6C645.8 373.8 654.9 372.5 664.0 370.7C673.1 368.9 683.2 366.4 691.4 364.7C699.6 363.0 706.5 362.4 713.3 360.6C720.1 358.8 726.9 356.5 732.4 353.7C737.9 350.9 741.7 348.1 746.0 344.0C750.3 339.9 753.6 334.3 758.4 329.0C763.2 323.7 774.7 316.8 775.0 312.0C775.3 307.2 765.5 298.7 760.0 300.0Z" fill="#3c2417"/><path d="M560.0 442.0C559.2 440.6 565.0 443.3 570.0 443.4C575.0 443.4 582.9 442.8 590.0 442.3C597.1 441.8 603.6 441.1 612.6 440.5C621.6 439.9 635.8 439.6 644.0 439.0C652.2 438.4 662.7 435.2 662.0 437.0C661.3 438.8 646.2 446.6 640.0 450.0C633.8 453.4 630.0 455.9 625.0 457.2C620.0 458.5 615.2 457.5 610.0 457.6C604.8 457.7 599.6 458.9 593.8 458.0C588.0 457.1 580.6 454.7 575.0 452.0C569.4 449.3 560.8 443.4 560.0 442.0Z" fill="#3c2417"/><path d="M560.0 443.2 L556.7 440.6 L549.7 436.0 L542.3 431.8 L534.3 427.8 L530.4 426.1M578.2 451.6 L572.3 446.7 L567.7 443.0 L562.5 439.5 L555.4 435.0 L548.0 430.8 L540.1 426.7 L535.8 424.8 L527.3 421.3 L523.3 420.1M614.1 463.4 L607.9 462.7 L600.7 458.3 L594.7 454.0 L590.8 451.2 L583.9 446.6 L576.6 442.2 L569.1 438.0 L561.4 433.9 L553.7 429.7 L546.0 425.6 L541.6 423.5 L533.4 420.0 L527.6 418.0 L519.5 415.9 L519.5 415.9M689.7 418.1 L686.0 418.5 L679.6 419.9 L676.8 420.8 L671.5 422.8 L666.3 424.9 L661.0 426.9 L656.0 429.1 L652.3 432.0 L649.9 435.7 L648.9 437.6 L644.6 440.2 L641.1 440.7 L635.0 440.9 L628.0 440.6 L622.9 440.4 L618.3 440.3 L613.6 440.3 L606.1 440.9 L602.1 441.1 L597.3 440.9 L591.3 439.9 L583.0 437.7 L577.2 435.6 L571.0 433.3 L564.0 430.4 L555.8 426.6 L548.5 423.0 L543.7 420.7 L535.1 417.0 L530.6 415.4 L522.2 412.9 L515.4 411.6 L515.4 411.6M704.1 407.8 L697.7 408.1 L693.7 408.3 L687.6 408.7 L682.5 409.5 L677.0 411.4 L672.8 412.9 L669.0 414.3 L663.3 416.1 L657.4 417.8 L654.3 418.5 L647.9 419.9 L644.6 420.5 L639.0 422.4 L634.0 424.5 L627.9 426.1 L624.4 426.7 L618.5 427.0 L611.9 427.1 L607.6 427.1 L603.3 427.1 L596.8 428.5 L591.8 429.5 L586.4 430.1 L581.7 429.9 L575.6 428.9 L567.5 426.8 L562.4 425.0 L553.8 421.4 L549.7 419.5 L541.2 415.8 L535.8 413.7 L527.6 410.9 L522.6 409.4 L517.3 408.1 L510.7 406.8 L510.7 406.8M310.5 292.0 L310.5 292.0M715.3 399.4 L708.0 399.3 L704.2 399.7 L698.8 400.3 L693.2 401.0 L689.4 401.4 L682.6 402.5 L679.1 403.1 L673.6 404.9 L668.2 406.9 L662.6 408.6 L659.6 409.5 L653.5 411.1 L648.3 412.2 L643.9 413.1 L637.4 414.4 L634.4 415.2 L628.3 416.8 L623.9 417.7 L618.1 418.5 L614.2 418.8 L606.3 419.2 L602.1 419.4 L597.9 419.7 L591.3 420.8 L587.0 421.7 L581.2 422.6 L577.0 422.7 L571.3 422.2 L565.2 421.0 L556.2 418.1 L551.8 416.3 L543.0 412.8 L538.6 411.1 L529.3 407.9 L524.4 406.4 L519.3 405.0 L512.7 403.5 L505.9 402.1 L505.9 402.1M315.9 293.1 L314.8 291.8 L312.2 289.0M737.3 384.8 L730.2 384.9 L726.8 385.4 L720.6 386.9 L717.2 387.7 L711.0 389.0 L705.7 390.1 L702.0 391.4 L696.1 393.1 L691.3 394.1 L686.5 395.1 L680.0 396.5 L676.9 397.2 L671.2 399.0 L665.7 400.9 L662.8 401.7 L656.8 403.4 L650.6 404.9 L647.5 405.6 L641.0 406.9 L637.8 407.6 L631.5 409.0 L626.1 410.1 L621.5 410.9 L616.1 411.6 L610.5 412.1 L606.5 412.4 L598.9 412.9 L594.9 413.3 L589.5 414.0 L584.5 414.9 L579.0 415.8 L573.6 416.2 L569.0 416.1 L563.2 415.3 L555.2 413.2 L549.6 411.3 L543.8 409.2 L535.9 406.4 L531.1 404.8 L523.3 402.5 L516.1 400.6 L510.8 399.4 L505.3 398.3 L501.5 397.6M321.3 294.2 L319.2 291.5 L317.5 289.5 L316.8 288.7 L314.0 286.0M744.6 378.6 L738.3 377.4 L732.2 377.2 L725.8 377.8 L722.4 378.4 L716.3 379.9 L710.3 381.5 L707.2 382.3 L701.0 383.8 L695.3 385.6 L692.5 386.5 L686.7 388.2 L680.6 389.7 L677.6 390.6 L671.8 392.3 L666.3 394.2 L663.5 395.1 L657.6 396.8 L651.4 398.2 L648.2 398.9 L641.8 400.3 L638.5 401.0 L632.1 402.3 L626.9 403.4 L622.2 404.2 L616.6 405.0 L611.4 405.6 L607.5 406.0 L599.8 406.5 L596.0 406.9 L590.1 407.4 L585.0 408.1 L580.0 408.9 L574.7 409.8 L570.5 410.1 L563.4 409.9 L557.5 409.0 L552.3 407.8 L545.8 405.9 L537.8 403.3 L533.0 401.8 L526.6 399.9 L518.1 397.5 L512.9 396.2 L507.4 395.1 L501.8 394.0 L497.6 393.3M326.3 295.1 L323.7 291.3 L321.3 288.3 L318.7 285.6 L315.7 283.0M750.7 373.1 L743.7 370.9 L737.2 369.7 L732.8 369.7 L725.4 370.5 L722.1 371.1 L715.8 372.6 L712.8 373.5 L707.3 375.3 L701.6 377.1 L696.6 378.5 L692.7 379.5 L686.8 381.2 L682.0 382.6 L678.0 383.7 L672.3 385.5 L666.8 387.4 L664.1 388.4 L658.5 390.2 L652.4 391.8 L649.2 392.5 L642.7 393.8 L638.7 394.6 L632.9 395.8 L627.3 396.9 L623.1 397.7 L616.5 398.8 L612.7 399.3 L607.2 399.9 L601.3 400.4 L597.4 400.6 L589.9 401.3 L586.0 401.7 L580.5 402.4 L575.5 403.2 L570.3 404.0 L564.2 404.3 L559.5 404.1 L553.7 403.3 L546.6 401.8 L540.0 400.0 L535.0 398.6 L529.6 397.1 L520.8 394.6 L514.9 393.0 L509.6 391.8 L504.1 390.7 L498.3 389.8 L493.7 389.1M330.6 295.5 L328.5 291.8 L325.8 288.0 L323.4 285.2 L319.7 281.7 L317.4 280.0M756.4 367.8 L751.9 366.0 L743.7 363.8 L737.8 363.0 L733.2 362.9 L726.7 363.5 L722.2 364.2 L715.9 365.4 L712.6 366.2 L706.9 368.0 L701.6 370.0 L698.2 371.3 L693.5 372.9 L687.4 374.5 L683.3 375.6 L678.4 376.9 L672.6 378.6 L667.9 380.2 L664.3 381.4 L658.9 383.4 L653.3 385.3 L650.2 386.0 L643.8 387.3 L638.7 388.3 L633.9 389.2 L627.5 390.5 L624.1 391.2 L617.5 392.5 L614.1 393.0 L606.8 393.9 L602.9 394.2 L598.0 394.6 L591.3 395.1 L587.5 395.5 L580.2 396.3 L576.6 396.8 L570.1 397.8 L566.0 398.3 L561.4 398.5 L554.4 398.3 L548.4 397.5 L542.8 396.4 L537.4 395.2 L531.9 393.9 L523.4 391.5 L517.1 389.8 L511.8 388.5 L506.4 387.4 L500.7 386.4 L494.7 385.5 L489.9 385.0M334.8 295.9 L333.0 292.4 L330.7 288.6 L328.0 284.8 L325.5 281.9 L319.1 277.0 L319.1 277.0M762.2 362.5 L759.0 360.0 L754.8 358.2 L747.5 356.4 L742.1 355.9 L736.7 355.8 L729.6 356.3 L726.2 356.9 L719.2 357.9 L715.8 358.5 L709.5 359.9 L704.7 361.3 L700.9 362.6 L695.8 364.7 L690.7 366.8 L684.9 368.5 L681.8 369.3 L675.8 370.9 L670.5 372.4 L667.0 373.4 L661.5 375.3 L656.1 377.3 L651.7 378.9 L647.8 380.1 L641.3 381.4 L638.1 382.1 L631.4 383.3 L628.0 384.0 L621.5 385.2 L616.7 386.2 L611.7 387.1 L606.3 387.9 L600.6 388.4 L596.7 388.7 L589.0 389.3 L585.1 389.6 L580.0 390.1 L574.2 390.9 L570.1 391.6 L563.5 392.3 L559.6 392.6 L553.2 392.7 L546.6 392.2 L540.6 391.4 L534.9 390.4 L529.6 389.2 L524.4 387.8 L517.2 385.9 L509.8 384.3 L503.2 383.0 L497.3 382.1 L491.7 381.4 L486.4 380.9 L486.4 380.9M339.0 296.3 L337.3 292.9 L335.4 289.2 L333.0 285.3 L330.3 281.5 L327.9 278.6 L324.5 275.4 L321.7 273.6M771.6 355.1 L767.2 353.3 L758.2 349.9 L753.3 348.5 L747.6 347.5 L740.7 347.2 L735.4 347.5 L731.8 348.0 L725.3 349.3 L720.2 350.4 L715.7 351.4 L709.2 352.7 L706.1 353.4 L700.2 355.1 L694.7 357.0 L691.8 358.2 L687.0 360.2 L681.7 362.2 L675.9 363.9 L672.9 364.7 L667.0 366.3 L661.2 368.1 L657.4 369.4 L652.9 370.9 L647.4 372.8 L641.6 374.5 L638.4 375.2 L631.9 376.6 L628.7 377.2 L622.0 378.4 L617.9 379.2 L612.0 380.3 L607.1 381.1 L601.6 381.9 L597.6 382.3 L590.2 382.9 L586.4 383.2 L580.1 383.8 L575.1 384.3 L570.8 384.8 L564.2 385.7 L560.6 386.1 L552.9 386.8 L548.6 386.8 L543.9 386.7 L538.7 386.2 L532.8 385.3 L525.9 383.9 L518.4 382.2 L511.3 380.6 L505.7 379.5 L499.9 378.5 L493.9 377.7 L487.9 377.2 L482.9 376.9 L482.9 376.9M343.2 296.7 L341.5 293.3 L339.7 289.7 L337.7 286.0 L335.5 282.2 L332.8 278.2 L330.4 275.1 L327.9 272.3 L325.0 269.7M782.5 346.9 L777.0 345.7 L771.9 344.3 L765.4 342.5 L757.2 340.4 L751.4 339.1 L745.5 338.2 L739.8 337.9 L735.8 338.2 L729.0 339.3 L725.9 340.1 L720.2 341.8 L714.4 343.6 L711.4 344.4 L705.3 345.9 L699.4 347.5 L696.4 348.4 L690.8 350.2 L685.4 352.2 L680.2 354.3 L677.7 355.3 L672.3 357.3 L666.6 359.1 L662.0 360.4 L657.9 361.7 L652.2 363.4 L646.5 365.2 L643.7 366.1 L637.9 367.9 L631.9 369.5 L628.7 370.2 L622.2 371.5 L618.9 372.1 L612.1 373.3 L608.8 373.9 L601.8 375.0 L598.3 375.5 L591.1 376.4 L587.3 376.7 L580.4 377.4 L575.9 377.7 L571.6 378.1 L564.5 378.8 L560.8 379.2 L553.5 380.1 L549.7 380.4 L544.8 380.7 L537.6 380.6 L531.4 380.0 L525.3 379.1 L519.8 378.0 L514.2 376.9 L508.6 375.9 L502.8 374.9 L496.8 374.1 L490.5 373.4 L484.0 373.0 L479.3 372.9 L479.3 372.9M347.4 297.1 L345.8 293.7 L343.9 290.1 L342.0 286.5 L340.0 282.8 L338.0 279.1 L335.7 275.3 L333.0 271.6 L330.6 268.7 L328.3 265.8 L328.3 265.8M764.7 332.6 L756.1 330.1 L750.7 328.9 L744.8 328.0 L738.7 327.7 L734.7 328.0 L728.3 329.0 L724.8 329.9 L719.3 331.8 L714.3 333.9 L709.2 336.1 L706.5 337.0 L700.8 338.8 L694.9 340.5 L691.4 341.6 L686.4 343.2 L681.0 345.2 L675.8 347.2 L670.8 349.4 L668.2 350.4 L662.8 352.4 L657.0 354.1 L652.1 355.6 L648.3 356.7 L642.6 358.5 L636.9 360.2 L634.0 361.1 L628.1 362.8 L622.3 364.1 L618.6 364.9 L611.9 366.1 L608.6 366.7 L601.8 367.9 L598.3 368.4 L591.3 369.4 L587.7 369.9 L581.2 370.6 L576.5 371.1 L572.4 371.4 L565.0 372.0 L561.1 372.3 L554.8 372.9 L549.9 373.5 L545.8 373.9 L538.3 374.4 L533.9 374.4 L529.1 374.2 L523.7 373.6 L517.9 372.8 L512.0 371.9 L506.0 371.1 L500.0 370.2 L493.9 369.5 L487.4 368.9 L480.4 368.7 L475.8 368.9 L475.8 368.9M352.0 297.8 L350.1 294.2 L348.3 290.8 L346.5 287.5 L344.7 284.2 L343.0 281.0 L341.3 277.7 L339.6 274.4 L337.6 271.3 L335.2 267.9 L332.4 263.9 L331.7 261.9M742.1 317.6 L736.1 318.2 L730.4 318.4 L726.7 318.9 L720.2 320.2 L714.6 322.0 L712.1 323.1 L707.4 325.5 L702.9 328.0 L698.1 330.2 L692.6 332.1 L687.0 333.9 L684.2 334.9 L678.7 336.8 L673.5 338.8 L668.4 341.0 L663.5 343.2 L660.8 344.3 L655.5 346.2 L649.8 348.0 L644.0 349.7 L641.1 350.6 L635.4 352.3 L629.6 354.1 L626.7 354.9 L620.8 356.6 L614.7 357.9 L611.2 358.6 L604.5 359.9 L601.2 360.5 L594.4 361.7 L591.0 362.2 L584.1 363.3 L580.5 363.8 L573.6 364.5 L569.1 364.8 L564.9 365.2 L557.6 365.8 L553.7 366.1 L547.5 366.6 L542.2 367.1 L538.4 367.4 L530.4 367.9 L526.0 367.9 L521.3 367.7 L516.2 367.3 L510.2 366.7 L503.9 366.0 L497.7 365.3 L491.5 364.6 L484.7 364.2 L479.8 364.1 L475.4 364.1 L472.3 364.8M357.3 298.8 L354.6 294.8 L352.5 291.0 L350.5 287.5 L348.7 284.3 L346.9 281.0 L345.2 277.7 L343.5 274.4 L341.7 271.2 L339.7 268.1 L337.6 264.8 L335.4 261.0 L334.8 258.0 L334.8 258.0M733.4 310.6 L729.0 310.6 L723.2 310.8 L716.9 311.3 L713.4 311.7 L707.2 313.2 L702.0 315.3 L697.5 317.8 L693.2 320.3 L688.5 322.7 L684.4 324.5 L680.8 325.9 L675.6 327.9 L670.4 330.0 L665.3 332.1 L660.3 334.3 L657.8 335.4 L652.8 337.6 L647.4 339.6 L641.9 341.4 L637.7 342.7 L633.4 344.1 L627.6 345.9 L621.9 347.6 L618.9 348.5 L612.8 350.0 L608.5 351.0 L603.2 352.1 L596.8 353.4 L593.5 354.1 L586.8 355.3 L583.4 355.8 L576.4 356.9 L572.7 357.3 L566.6 357.9 L561.4 358.4 L557.5 358.7 L549.8 359.3 L545.9 359.6 L540.6 360.1 L534.3 360.5 L530.5 360.8 L523.7 361.2 L517.9 361.2 L513.3 361.1 L508.4 360.8 L502.7 360.4 L496.3 359.8 L489.9 359.2 L483.0 358.9 L478.6 358.9 L474.3 358.9 L467.7 359.1 L465.8 359.1M362.6 299.9 L360.3 296.9 L358.3 293.8 L356.4 290.7 L354.5 287.5 L352.4 284.0 L350.3 280.2 L348.3 276.5 L346.4 272.9 L344.3 269.2 L342.0 265.3 L339.8 261.7 L337.9 258.6 L336.5 255.1 L336.5 255.1M724.7 303.6 L717.7 303.4 L711.2 303.4 L707.0 303.5 L701.4 304.2 L696.9 305.3 L691.6 307.3 L686.9 309.7 L682.6 312.3 L678.2 314.8 L673.5 317.2 L668.6 319.4 L663.7 321.7 L661.3 322.8 L656.4 325.0 L651.5 327.3 L646.5 329.5 L641.4 331.6 L636.1 333.6 L633.4 334.5 L627.9 336.4 L622.3 338.3 L616.8 340.0 L613.6 340.9 L607.6 342.5 L603.2 343.5 L598.2 344.6 L591.9 346.1 L588.6 346.8 L582.1 348.1 L578.8 348.7 L571.9 349.8 L568.3 350.2 L560.9 351.0 L557.1 351.4 L551.3 351.9 L545.6 352.4 L541.7 352.7 L534.1 353.2 L530.0 353.5 L525.6 353.8 L517.9 354.2 L513.7 354.3 L509.3 354.3 L502.9 354.1 L496.1 353.6 L489.7 353.1 L484.7 352.8 L480.0 352.6 L475.4 352.7 L467.8 352.8 L462.0 352.4 L455.7 351.2 L455.5 351.2M367.9 300.9 L364.6 296.8 L362.4 293.7 L360.4 290.6 L358.5 287.4 L356.6 284.3 L354.4 280.6 L352.2 276.8 L350.1 273.0 L348.0 269.3 L345.8 265.5 L343.7 261.8 L341.9 258.5 L340.0 255.4 L338.1 252.2 L338.1 252.2M714.6 295.8 L710.0 295.7 L705.4 295.6 L698.1 295.6 L692.6 295.8 L689.0 296.3 L682.9 297.8 L677.9 300.0 L673.6 302.6 L669.5 305.3 L665.3 307.9 L660.9 310.4 L656.3 312.9 L651.6 315.2 L646.9 317.6 L642.2 319.9 L637.3 322.2 L634.9 323.3 L629.8 325.4 L624.6 327.5 L619.2 329.4 L613.6 331.3 L610.8 332.2 L605.1 334.0 L599.1 335.6 L596.0 336.4 L589.8 337.9 L585.4 338.9 L580.3 340.0 L573.8 341.3 L570.4 341.9 L563.6 343.0 L560.0 343.5 L553.8 344.2 L548.8 344.6 L544.9 344.9 L537.0 345.5 L533.1 345.7 L528.3 346.0 L521.1 346.4 L517.1 346.6 L512.0 346.8 L504.5 346.8 L499.6 346.7 L494.8 346.5 L489.8 346.2 L484.1 345.8 L477.2 345.5 L471.0 345.4 L466.6 345.5 L462.0 345.3 L456.2 344.7 L450.0 343.5 L442.4 341.6 L442.4 341.6M373.2 302.0 L369.5 297.3 L366.6 293.6 L364.6 290.5 L362.6 287.4 L360.6 284.2 L358.6 281.0 L356.3 277.1 L353.9 273.2 L351.6 269.4 L349.4 265.6 L347.4 261.9 L345.7 258.6 L343.9 255.4 L341.9 252.3 L339.6 249.3 L339.6 249.3M703.5 287.4 L696.6 286.0 L691.4 285.5 L686.5 285.2 L682.1 285.3 L675.2 286.4 L670.1 288.5 L666.0 291.2 L662.4 294.2 L658.7 297.1 L654.9 299.9 L650.7 302.6 L646.4 305.2 L641.9 307.7 L637.5 310.2 L632.9 312.6 L628.2 315.0 L623.4 317.2 L618.3 319.4 L613.0 321.4 L610.3 322.4 L604.8 324.3 L599.3 326.1 L593.7 327.9 L590.6 328.7 L584.5 330.3 L580.4 331.2 L575.0 332.4 L568.7 333.6 L565.1 334.3 L558.4 335.5 L554.9 336.1 L548.1 336.9 L543.8 337.3 L539.6 337.5 L531.8 338.0 L527.8 338.1 L523.2 338.4 L515.6 338.7 L511.4 338.9 L507.1 338.9 L500.0 338.9 L493.4 338.6 L488.5 338.4 L483.6 338.0 L478.6 337.7 L472.9 337.4 L465.9 337.1 L459.2 336.7 L453.7 336.1 L447.4 334.9 L442.1 333.7 L436.7 332.5 L431.2 331.4 L426.2 330.4M391.4 310.4 L385.4 306.4 L378.7 301.8 L375.7 298.9 L371.4 293.9 L368.8 290.3 L366.7 287.3 L364.7 284.2 L362.7 281.0 L360.6 277.6 L358.1 273.6 L355.5 269.6 L353.0 265.6 L351.1 262.1 L349.4 258.8 L347.7 255.5 L345.9 252.2 L343.8 249.2 L341.2 246.4M673.7 268.4 L670.1 268.8 L665.5 271.2 L662.5 273.6 L660.1 275.7 L657.1 279.0 L654.6 282.4 L653.2 284.4 L650.4 287.8 L647.0 290.9 L645.2 292.4 L641.2 295.2 L636.9 297.7 L632.6 300.3 L628.4 303.0 L624.1 305.6 L619.5 308.0 L614.7 310.3 L610.3 312.1 L606.9 313.4 L601.5 315.3 L596.0 317.2 L590.6 319.1 L587.8 320.1 L582.0 321.8 L575.8 323.3 L572.7 324.0 L566.1 325.3 L562.8 325.9 L556.0 327.1 L552.7 327.7 L545.7 328.7 L542.0 329.2 L534.9 329.7 L530.1 329.9 L526.0 330.1 L518.9 330.3 L513.5 330.5 L509.3 330.6 L503.4 330.7 L496.1 330.6 L491.4 330.4 L486.6 330.2 L481.7 329.9 L475.7 329.5 L468.9 329.1 L462.2 328.7 L456.6 328.2 L451.0 327.4 L444.7 326.4 L438.5 325.2 L433.0 324.1 L427.8 322.8 L421.7 320.7 L414.5 317.6 L406.4 313.7 L398.6 309.7 L391.0 305.5 L383.9 301.0 L378.0 295.8 L375.5 293.0 L373.2 290.1 L370.4 286.3 L367.6 282.1 L365.1 278.2 L362.9 274.7 L360.8 271.6 L358.7 268.5 L356.7 265.4 L354.7 262.1 L352.8 258.5 L351.2 255.0 L349.3 251.4 L346.7 247.4 L343.2 243.2 L343.2 243.2M652.4 254.1 L653.2 257.1 L652.3 260.4 L651.5 263.7 L650.6 265.7 L648.2 269.4 L646.0 272.5 L644.9 275.1 L642.9 278.6 L641.4 280.7 L638.3 283.9 L634.6 286.9 L630.4 289.5 L626.1 292.0 L622.0 294.8 L620.0 296.2 L615.8 298.8 L611.2 301.2 L608.8 302.4 L603.8 304.5 L598.4 306.5 L592.9 308.4 L587.6 310.3 L584.8 311.3 L579.3 313.2 L573.4 314.9 L570.3 315.6 L563.9 317.0 L559.7 317.7 L553.7 318.7 L549.4 319.3 L543.3 320.3 L539.4 320.9 L532.2 321.5 L528.2 321.8 L522.5 322.0 L515.6 322.1 L511.3 322.2 L507.1 322.3 L499.4 322.4 L494.1 322.4 L489.5 322.3 L484.7 322.1 L478.3 321.7 L471.5 321.4 L465.4 321.1 L460.6 320.8 L455.5 320.5 L450.0 319.8 L444.0 318.9 L437.6 317.7 L430.4 316.2 L424.1 314.4 L419.5 312.8 L410.8 309.2 L406.4 307.5 L397.8 303.9 L389.9 299.9 L383.2 295.2 L380.3 292.5 L376.1 287.6 L373.3 283.8 L371.1 280.7 L369.1 277.6 L367.1 274.5 L364.7 270.9 L361.7 266.7 L358.8 262.5 L356.8 259.1 L355.2 255.7 L353.6 252.3 L352.0 249.0 L350.0 245.9 L347.7 242.9 L345.3 240.1M644.9 247.8 L644.2 250.2 L643.0 254.3 L642.7 256.7 L642.3 259.8 L640.9 263.2 L638.8 266.1 L637.2 268.7 L634.8 272.4 L633.5 274.1 L630.4 277.4 L626.7 280.3 L622.6 283.0 L618.3 285.6 L614.2 288.3 L610.1 291.0 L605.6 293.5 L600.8 295.7 L595.6 297.8 L590.2 299.8 L584.8 301.7 L582.0 302.7 L576.6 304.6 L571.0 306.4 L566.4 307.6 L561.7 308.7 L555.0 309.9 L551.6 310.5 L544.7 311.6 L541.2 312.1 L534.8 312.9 L530.3 313.4 L526.1 313.7 L518.2 314.0 L513.9 314.1 L509.7 314.2 L502.6 314.3 L496.8 314.4 L492.5 314.4 L487.6 314.4 L480.6 314.2 L474.0 313.9 L469.3 313.8 L464.7 313.6 L459.4 313.5 L452.7 313.1 L446.4 312.4 L440.5 311.5 L434.9 310.4 L429.7 309.2 L422.7 307.2 L415.2 304.7 L410.5 303.1 L401.2 299.9 L396.9 298.1 L389.1 294.1 L384.2 290.2 L380.4 286.2 L378.1 283.3 L375.6 280.2 L372.5 275.9 L369.9 271.9 L367.3 268.1 L365.1 265.1 L362.9 262.1 L360.8 259.0 L358.9 255.4 L357.4 252.1 L355.8 248.6 L353.7 244.9 L350.5 240.6 L347.3 236.9 L347.3 236.9M639.8 242.9 L636.7 246.2 L635.4 249.0 L634.7 252.6 L634.5 255.0 L633.1 258.8 L631.6 260.9 L628.9 264.4 L627.4 266.4 L624.5 269.5 L620.9 272.5 L616.9 275.2 L612.7 277.9 L608.6 280.6 L604.6 283.3 L600.2 285.8 L595.3 288.1 L590.0 290.1 L584.7 292.1 L579.3 294.0 L576.6 295.0 L571.2 297.0 L565.6 298.8 L561.6 299.8 L556.2 301.0 L550.3 302.1 L546.1 302.8 L539.9 303.8 L535.7 304.4 L530.1 305.1 L524.6 305.6 L520.7 305.9 L513.4 306.1 L508.1 306.2 L503.9 306.3 L497.9 306.5 L491.1 306.6 L486.8 306.6 L482.3 306.6 L475.6 306.4 L468.5 306.3 L464.1 306.2 L459.6 306.2 L454.0 306.0 L447.3 305.6 L441.1 304.9 L435.4 303.9 L430.1 302.7 L424.6 301.2 L415.8 298.7 L410.2 297.0 L405.3 295.5 L396.4 292.1 L389.0 287.8 L383.9 283.0 L381.0 279.6 L378.5 276.8 L375.9 273.3 L373.1 269.2 L369.8 264.8 L367.5 261.7 L365.4 258.7 L363.3 255.6 L361.6 252.3 L360.1 248.9 L358.5 245.5 L356.4 241.9 L352.9 237.4 L349.4 233.7 L349.4 233.7M634.8 238.0 L630.7 240.7 L629.1 242.3 L626.9 246.1 L626.2 248.2 L624.8 252.5 L623.9 254.5 L621.5 258.2 L619.7 260.2 L616.6 263.0 L612.6 265.7 L608.4 268.4 L604.3 271.0 L600.4 273.9 L596.5 276.7 L592.1 279.2 L586.9 281.2 L581.3 283.1 L577.7 284.3 L573.1 286.0 L567.8 288.0 L562.6 290.0 L557.6 291.6 L553.7 292.5 L547.0 293.7 L543.5 294.2 L536.6 295.3 L533.1 295.8 L526.1 296.9 L522.5 297.4 L516.8 297.9 L510.7 298.1 L506.4 298.2 L501.3 298.3 L493.6 298.4 L489.4 298.5 L485.2 298.7 L478.0 298.8 L472.2 298.8 L467.6 298.7 L463.1 298.6 L456.1 298.6 L449.5 298.4 L444.5 298.0 L438.8 297.3 L432.2 296.0 L425.9 294.5 L420.8 293.2 L415.8 291.8 L407.5 289.5 L401.3 287.3 L393.4 283.3 L387.3 278.3 L384.6 275.5 L381.3 271.9 L377.5 267.2 L375.0 264.0 L372.7 261.0 L370.2 257.9 L367.4 253.8 L365.4 250.1 L363.8 246.7 L362.1 243.2 L359.8 239.4 L357.0 235.8 L354.4 233.1 L351.6 230.4M629.7 233.1 L624.6 235.2 L620.5 237.9 L617.4 241.2 L616.3 243.1 L614.3 247.0 L613.3 249.1 L611.0 252.7 L607.2 255.5 L602.6 258.0 L598.2 260.5 L594.0 263.1 L590.3 266.1 L588.5 267.6 L584.7 270.4 L580.3 272.3 L576.5 273.3 L570.5 274.9 L565.2 276.7 L562.3 277.8 L557.2 279.9 L552.2 282.1 L546.4 283.8 L543.0 284.4 L535.8 285.3 L532.2 285.8 L525.3 286.8 L521.8 287.4 L515.1 288.6 L511.5 289.0 L505.9 289.4 L498.8 289.3 L494.4 289.3 L490.1 289.4 L483.0 289.7 L477.9 290.0 L473.9 290.2 L466.9 290.4 L460.7 290.2 L456.0 290.0 L451.4 289.9 L445.8 289.7 L439.4 289.1 L433.8 288.0 L427.7 286.4 L418.8 283.8 L413.9 282.4 L408.9 280.9 L400.0 277.5 L392.8 273.1 L386.6 268.1 L383.9 265.4 L380.2 261.7 L376.1 257.0 L373.8 254.1 L371.7 251.1 L369.8 247.9 L368.1 244.6 L366.5 241.2 L364.2 237.3 L359.7 232.3 L356.9 229.6 L354.0 227.1M624.0 227.8 L617.8 229.3 L612.5 231.3 L608.0 233.8 L604.5 236.9 L601.3 240.1 L597.8 243.1 L593.4 245.6 L588.6 247.9 L584.0 250.4 L579.8 253.0 L575.6 255.6 L571.1 258.1 L566.0 260.2 L560.2 261.9 L554.7 263.7 L551.8 264.7 L546.8 266.9 L541.9 269.1 L536.6 271.1 L532.1 272.3 L527.1 273.3 L521.5 274.1 L516.7 274.9 L511.3 275.7 L506.4 276.5 L501.3 277.2 L495.3 277.8 L491.4 278.0 L484.4 278.4 L479.3 278.7 L475.5 279.0 L467.6 279.5 L463.4 279.6 L459.0 279.6 L452.9 279.3 L446.4 278.8 L440.3 278.0 L434.6 277.0 L429.4 275.7 L422.4 273.8 L414.6 271.4 L409.8 269.9 L400.9 266.5 L396.8 264.5 L389.6 260.1 L386.4 257.7 L380.9 252.5 L378.3 249.5 L376.1 246.5 L374.1 243.4 L372.3 240.0 L370.0 236.2 L365.6 231.2 L362.6 228.7 L356.3 223.7 L356.3 223.7M616.3 221.4 L610.1 222.9 L605.8 223.8 L600.8 225.1 L596.3 227.6 L592.2 230.3 L587.7 232.8 L582.4 234.8 L576.8 236.6 L572.0 238.9 L569.8 240.2 L565.2 242.6 L560.3 244.8 L555.0 246.8 L549.1 248.5 L546.0 249.2 L540.1 250.9 L535.1 253.1 L530.3 255.4 L525.1 257.5 L522.3 258.4 L516.1 259.9 L511.9 260.6 L505.7 261.5 L501.9 262.0 L495.7 263.3 L489.9 264.6 L486.2 265.5 L479.4 266.6 L475.8 267.1 L469.2 268.0 L465.4 268.7 L459.5 269.3 L453.5 269.4 L448.6 269.2 L443.4 268.7 L437.9 268.0 L431.0 266.6 L423.2 264.5 L418.4 263.0 L409.9 259.6 L405.2 257.7 L396.5 254.2 L389.2 249.8 L383.3 244.7 L380.8 241.8 L378.8 238.7 L377.0 235.5 L373.7 231.2 L368.8 227.4 L362.3 222.6 L358.7 220.4M608.6 215.0 L601.9 216.2 L598.7 216.9 L592.7 218.5 L587.8 220.8 L583.3 223.2 L578.4 225.4 L574.6 226.9 L570.4 228.4 L565.1 230.5 L560.0 232.6 L554.8 234.6 L551.0 236.1 L547.0 237.7 L541.4 239.6 L535.5 241.2 L532.5 242.0 L526.9 243.9 L521.7 246.0 L516.3 247.9 L513.3 248.7 L506.7 250.0 L503.2 250.5 L495.8 251.3 L492.2 251.7 L485.8 253.1 L482.4 254.1 L477.4 255.9 L471.5 257.6 L467.2 258.6 L462.0 259.7 L455.9 260.8 L451.7 261.3 L447.2 261.5 L440.2 261.3 L434.1 260.5 L428.5 259.4 L423.4 258.1 L414.4 254.7 L410.2 252.8 L401.7 249.2 L393.9 245.1 L387.6 240.2 L385.3 237.3 L383.4 234.1 L381.4 231.0 L375.4 225.9 L368.8 221.4 L365.3 218.8 L362.0 216.4M600.3 208.2 L594.4 209.2 L590.6 210.2 L585.0 212.1 L580.0 214.3 L575.3 216.6 L570.4 218.9 L567.9 220.0 L562.8 222.1 L557.6 224.1 L552.3 226.1 L547.0 227.9 L544.1 229.0 L539.0 231.1 L533.6 233.1 L527.8 234.8 L524.8 235.6 L519.1 237.4 L513.6 239.3 L510.7 240.2 L504.3 241.5 L499.9 242.1 L493.2 242.7 L489.2 243.0 L482.4 243.6 L478.6 244.5 L473.1 246.4 L467.9 248.4 L464.4 249.7 L459.4 251.1 L453.2 252.6 L449.9 253.3 L442.7 254.2 L438.5 254.3 L433.3 253.9 L427.1 252.8 L418.8 250.2 L414.5 248.4 L406.3 244.6 L398.4 240.5 L392.2 235.6 L389.9 232.6 L387.5 229.7 L381.8 224.4 L378.6 222.0 L371.9 217.3 L365.5 212.5 L365.5 212.5M589.8 200.2 L584.9 202.4 L579.4 204.4 L574.3 206.5 L569.6 208.8 L565.1 211.2 L562.8 212.5 L558.1 214.9 L553.3 217.1 L548.1 219.2 L542.7 221.2 L537.3 223.1 L534.7 224.2 L529.6 226.3 L524.2 228.2 L518.5 230.0 L515.6 230.9 L509.9 232.6 L503.5 234.1 L500.1 234.6 L493.5 235.2 L488.6 235.6 L484.6 235.8 L476.9 236.5 L473.5 237.0 L467.5 238.6 L462.2 240.4 L459.1 241.4 L453.4 243.2 L447.3 244.6 L443.8 245.3 L437.7 245.9 L431.5 245.8 L425.3 244.7 L420.1 243.2 L414.0 240.8 L407.4 237.6 L400.4 233.1 L397.4 230.6 L391.7 225.5 L388.6 222.8 L382.1 218.0 L377.3 214.7 L372.3 210.8 L369.4 208.2M580.6 193.0 L575.7 195.2 L573.0 196.1 L567.7 198.1 L562.9 200.5 L558.7 203.1 L554.7 205.9 L550.7 208.6 L546.4 211.2 L541.5 213.4 L536.1 215.4 L530.7 217.4 L525.6 219.5 L522.9 220.6 L518.1 222.7 L512.8 224.7 L506.9 226.4 L503.7 227.1 L496.5 228.0 L492.6 228.3 L486.7 228.6 L480.4 228.9 L476.5 229.2 L469.4 230.0 L465.7 230.6 L459.3 231.9 L456.2 232.7 L449.9 234.1 L445.7 235.0 L439.8 235.9 L436.0 236.2 L429.1 236.0 L423.4 235.0 L417.6 233.2 L410.1 229.8 L402.9 225.4 L398.7 222.4 L393.0 218.3 L386.3 213.6 L379.9 209.1 L376.6 206.4 L373.6 203.8M571.7 185.8 L565.0 186.0 L560.6 187.0 L555.4 189.1 L551.1 191.7 L547.8 194.8 L546.4 196.6 L543.7 200.1 L540.8 203.4 L536.9 206.2 L531.7 208.3 L526.1 210.2 L520.9 212.2 L516.1 214.5 L511.6 217.0 L507.2 219.1 L503.9 220.2 L496.8 221.2 L492.7 221.3 L488.3 221.4 L480.8 221.5 L475.5 221.6 L471.5 221.8 L464.1 222.6 L460.5 223.0 L454.0 224.0 L449.8 224.5 L444.6 225.1 L438.4 225.5 L434.1 225.6 L429.3 225.4 L423.1 224.3 L414.1 221.3 L410.0 219.4 L402.5 215.1 L398.9 212.9 L392.1 208.3 L385.9 203.3 L383.5 200.4 L383.5 196.5 L383.7 196.0" fill="none" stroke="#1c260a" stroke-width="0.65" stroke-opacity=".9"/><path d="M709.6 403.7 L705.2 403.8 L701.1 404.0 L693.3 404.6 L689.6 405.0 L684.0 405.5 L679.1 406.5 L673.8 408.5 L668.4 410.5 L665.6 411.4 L659.9 413.1 L653.7 414.7 L650.6 415.4 L644.0 416.7 L640.7 417.3 L634.9 419.0 L629.1 420.8 L626.0 421.5 L618.8 422.4 L614.9 422.7 L609.2 422.8 L602.3 423.0 L598.5 423.4 L592.1 424.8 L588.9 425.5 L581.4 426.2 L576.5 425.9 L570.2 424.9 L563.9 423.1 L559.3 421.5 L550.7 417.9 L545.7 415.8 L537.7 412.6 L532.1 410.6 L523.5 407.9 L518.4 406.6 L513.0 405.4 L508.3 404.5M313.2 292.5 L311.4 290.5M733.5 388.0 L728.0 389.6 L722.2 391.4 L718.7 392.2 L712.6 393.4 L706.9 394.6 L703.1 395.6 L696.5 396.8 L693.1 397.4 L686.3 398.5 L682.9 399.1 L676.6 400.5 L671.3 402.3 L668.3 403.3 L662.6 405.1 L656.6 406.8 L653.6 407.5 L647.2 409.0 L643.4 409.8 L637.6 411.0 L631.3 412.5 L628.1 413.1 L621.4 414.3 L617.8 414.8 L611.1 415.4 L606.2 415.7 L602.2 416.0 L594.6 416.7 L591.2 417.2 L584.5 418.4 L581.1 419.0 L574.5 419.4 L568.0 418.8 L562.5 417.7 L557.6 416.3 L549.1 413.3 L544.0 411.2 L536.1 408.3 L530.2 406.3 L525.3 404.9 L517.7 402.8 L510.4 401.2 L504.2 399.9 L503.6 399.8M318.6 293.6 L318.2 293.1 L315.8 290.2 L314.2 288.6 L313.1 287.5M740.9 381.7 L734.8 380.9 L729.8 381.1 L726.1 381.5 L719.8 382.9 L713.9 384.4 L710.5 385.2 L703.9 386.5 L701.1 387.4 L695.6 389.3 L689.7 390.9 L686.2 391.7 L680.4 393.1 L674.4 394.7 L671.5 395.6 L666.0 397.5 L660.2 399.2 L656.5 400.2 L651.0 401.5 L644.6 402.9 L641.4 403.6 L634.9 404.9 L631.7 405.6 L625.2 407.0 L621.3 407.6 L614.6 408.5 L610.9 408.8 L603.3 409.4 L599.2 409.7 L594.6 410.1 L588.1 410.9 L584.7 411.5 L577.9 412.6 L574.2 413.0 L567.1 413.0 L561.1 412.2 L555.8 411.0 L550.4 409.5 L541.5 406.4 L536.8 404.8 L529.5 402.6 L522.2 400.4 L517.1 399.1 L511.8 397.8 L506.0 396.6 L499.5 395.4 L499.5 395.4M324.0 294.7 L322.6 292.9 L320.5 290.2 L320.3 289.9 L317.7 287.1 L314.8 284.5M747.8 375.7 L742.8 374.3 L736.9 373.4 L729.1 373.7 L725.6 374.1 L719.0 375.4 L716.0 376.2 L710.2 378.0 L704.3 379.6 L701.3 380.4 L695.4 382.1 L689.6 383.8 L686.7 384.7 L680.8 386.3 L674.9 388.0 L672.1 388.9 L666.6 390.8 L661.0 392.7 L656.6 393.9 L651.9 395.0 L645.5 396.4 L642.2 397.0 L635.7 398.4 L632.5 399.0 L626.0 400.3 L621.7 401.1 L615.7 402.0 L611.8 402.5 L604.4 403.1 L600.6 403.4 L594.5 403.9 L589.1 404.4 L585.4 404.8 L578.5 405.9 L575.1 406.5 L567.5 407.2 L563.0 407.1 L557.5 406.5 L550.5 405.0 L543.8 403.1 L538.9 401.6 L532.6 399.8 L524.1 397.3 L519.1 395.9 L513.9 394.6 L508.1 393.3 L501.7 392.2 L495.6 391.2 L495.6 391.2M328.4 295.3 L326.0 291.4 L322.3 286.7 L319.7 284.0 L316.6 281.5M753.5 370.4 L749.0 368.8 L743.6 367.3 L737.4 366.3 L731.0 366.3 L725.5 367.0 L720.8 367.9 L715.7 369.0 L709.9 370.7 L706.3 371.9 L701.7 373.6 L696.1 375.4 L690.1 377.0 L687.1 377.8 L681.1 379.5 L675.3 381.2 L672.4 382.1 L666.9 383.9 L661.5 385.9 L656.8 387.5 L652.9 388.5 L646.5 389.9 L643.3 390.6 L636.7 391.9 L633.1 392.6 L626.9 393.8 L621.7 394.8 L616.9 395.7 L611.5 396.4 L606.0 397.0 L602.1 397.3 L594.4 397.9 L590.5 398.2 L585.1 398.7 L579.5 399.4 L575.3 400.1 L569.0 401.0 L565.2 401.3 L558.3 401.3 L552.2 400.6 L546.6 399.5 L541.3 398.2 L535.0 396.7 L526.5 394.3 L521.1 392.8 L516.0 391.4 L510.4 390.1 L503.6 388.8 L497.6 387.8 L491.8 387.0 L491.8 387.0M332.7 295.7 L330.8 292.1 L328.1 288.1 L324.4 283.6 L321.7 280.8 L318.3 278.5M759.3 365.1 L750.6 361.6 L745.4 360.3 L739.2 359.6 L733.5 359.5 L729.6 359.8 L722.5 360.8 L719.0 361.3 L712.6 362.7 L709.6 363.5 L703.9 365.3 L698.7 367.3 L693.6 369.4 L690.4 370.5 L684.7 371.9 L678.6 373.5 L675.6 374.3 L669.8 376.0 L664.3 377.9 L659.6 379.6 L656.2 380.9 L650.6 382.7 L644.4 384.1 L641.0 384.7 L634.3 386.0 L631.0 386.6 L624.5 387.9 L621.2 388.5 L614.6 389.8 L611.0 390.4 L603.7 391.2 L599.9 391.5 L593.5 391.9 L588.2 392.4 L584.5 392.7 L577.2 393.6 L573.7 394.2 L566.6 395.1 L562.8 395.5 L557.3 395.6 L550.5 395.2 L544.5 394.4 L538.9 393.3 L533.5 392.2 L528.3 390.9 L520.2 388.7 L513.0 386.9 L507.6 385.7 L501.9 384.7 L496.0 383.8 L489.8 383.1 L488.1 382.9M336.9 296.1 L335.2 292.6 L333.3 289.3 L331.3 286.1 L329.1 283.1 L326.3 280.0 L320.4 275.4 L320.4 275.4M766.1 359.2 L763.0 356.8 L758.9 354.8 L750.9 352.4 L745.3 351.7 L740.7 351.6 L734.2 351.9 L729.3 352.6 L723.9 353.5 L719.2 354.4 L713.0 355.5 L709.4 356.3 L703.4 357.9 L698.4 359.6 L695.3 360.9 L690.2 363.0 L684.9 365.0 L678.9 366.6 L675.9 367.4 L669.9 369.0 L664.2 370.8 L661.4 371.7 L655.9 373.6 L650.5 375.6 L645.7 377.1 L641.6 378.0 L635.1 379.3 L631.7 380.0 L625.1 381.2 L621.8 381.8 L615.2 383.1 L611.6 383.8 L605.0 384.8 L601.2 385.2 L593.5 385.8 L589.6 386.1 L584.5 386.6 L578.3 387.2 L574.7 387.6 L567.6 388.6 L564.0 389.1 L556.7 389.7 L552.0 389.8 L547.4 389.6 L542.1 389.2 L536.3 388.3 L529.6 387.0 L521.8 385.1 L515.4 383.5 L510.0 382.3 L504.4 381.2 L498.6 380.3 L492.5 379.6 L486.0 379.0 L484.6 378.9M341.1 296.5 L339.4 293.1 L337.6 289.5 L335.6 286.0 L333.6 282.8 L331.5 279.8 L329.1 276.9 L323.3 271.6 L323.3 271.6M777.1 350.9 L771.0 349.2 L762.4 346.6 L757.5 345.1 L752.2 343.9 L746.4 342.9 L739.4 342.7 L734.0 343.2 L729.8 343.9 L724.3 345.2 L718.2 346.8 L715.2 347.5 L708.9 349.0 L703.8 350.3 L699.8 351.3 L694.1 353.2 L688.8 355.2 L685.6 356.5 L681.1 358.3 L675.6 360.2 L669.8 361.9 L666.9 362.8 L661.0 364.5 L655.3 366.2 L651.2 367.6 L647.0 369.0 L641.3 370.8 L635.7 372.3 L632.0 373.1 L625.5 374.4 L622.1 375.0 L615.5 376.2 L612.1 376.8 L605.3 377.9 L601.8 378.5 L594.5 379.3 L590.7 379.7 L584.6 380.2 L579.3 380.7 L575.5 381.0 L568.0 381.8 L564.4 382.2 L557.2 383.1 L553.3 383.5 L548.7 383.8 L541.4 383.7 L535.1 383.1 L529.1 382.2 L523.6 381.1 L518.2 379.9 L512.7 378.8 L507.1 377.7 L501.3 376.7 L495.3 375.9 L489.0 375.3 L482.2 374.9 L481.1 374.9M345.3 296.9 L343.6 293.5 L341.8 289.9 L339.9 286.3 L337.9 282.6 L336.0 279.4 L334.0 276.3 L331.7 273.4 L328.3 269.5 L326.7 267.7M777.8 341.1 L771.6 339.3 L766.6 337.9 L760.7 336.3 L753.1 334.5 L746.8 333.4 L741.7 333.0 L737.3 333.0 L730.1 333.9 L727.0 334.7 L721.4 336.5 L716.0 338.4 L710.5 340.3 L707.6 341.2 L701.6 342.8 L695.8 344.5 L692.9 345.4 L687.3 347.2 L682.0 349.2 L676.8 351.3 L674.2 352.4 L669.0 354.4 L663.3 356.2 L657.5 357.9 L654.6 358.8 L648.9 360.5 L643.2 362.3 L640.3 363.2 L634.5 364.9 L628.5 366.5 L625.3 367.2 L618.8 368.5 L615.2 369.2 L608.7 370.3 L604.6 371.0 L598.3 372.0 L594.6 372.5 L587.6 373.4 L583.9 373.8 L576.3 374.4 L572.4 374.7 L567.6 375.2 L561.0 375.8 L557.2 376.2 L549.9 377.0 L546.1 377.3 L541.1 377.6 L533.9 377.4 L527.6 376.8 L521.6 375.9 L515.9 374.9 L510.2 373.9 L504.3 373.0 L498.4 372.2 L492.2 371.5 L486.7 371.0 L482.0 370.8 L477.6 370.9 L477.6 370.9M349.6 297.4 L347.9 294.0 L346.0 290.3 L344.1 286.7 L342.2 283.1 L340.2 279.4 L338.4 276.1 L336.5 272.9 L334.2 269.9 L332.0 267.0 L330.0 263.8M751.6 324.1 L745.6 323.1 L740.6 322.8 L736.2 322.8 L728.7 323.5 L725.4 324.2 L719.7 325.9 L714.6 328.0 L709.8 330.4 L706.1 332.1 L702.4 333.7 L696.8 335.5 L691.0 337.3 L688.1 338.2 L682.7 340.0 L677.3 342.0 L672.2 344.1 L667.2 346.3 L664.6 347.4 L659.2 349.3 L653.5 351.1 L647.8 352.8 L644.8 353.7 L639.1 355.4 L633.3 357.2 L630.4 358.0 L624.5 359.7 L618.4 361.1 L614.9 361.8 L608.3 363.0 L604.9 363.6 L598.1 364.8 L594.7 365.3 L587.7 366.4 L584.2 366.9 L577.3 367.6 L572.9 368.0 L568.6 368.3 L561.3 368.9 L557.5 369.2 L551.1 369.8 L546.1 370.3 L542.2 370.6 L534.4 371.1 L530.0 371.2 L525.2 370.9 L519.9 370.4 L514.0 369.7 L508.0 368.9 L501.8 368.2 L495.7 367.4 L489.4 366.8 L482.5 366.5 L477.7 366.4 L474.1 366.8 L474.1 366.8M354.6 298.3 L352.4 294.5 L350.3 290.8 L348.3 287.1 L346.3 283.4 L344.4 279.8 L342.5 276.2 L340.7 272.8 L338.7 269.7 L336.5 266.6 L334.5 263.5 L333.3 259.9 L333.3 259.9M737.7 314.1 L733.6 314.2 L725.8 314.6 L721.8 315.0 L715.6 316.2 L712.2 317.1 L707.1 319.2 L702.6 321.7 L698.2 324.2 L693.4 326.5 L688.1 328.6 L683.9 330.1 L680.0 331.5 L674.6 333.4 L669.5 335.5 L664.5 337.7 L659.5 339.9 L657.0 341.0 L651.5 342.9 L645.9 344.7 L640.5 346.4 L637.3 347.4 L631.6 349.1 L625.8 350.9 L622.9 351.7 L616.9 353.3 L611.4 354.6 L607.3 355.4 L600.7 356.7 L597.4 357.3 L590.7 358.5 L587.3 359.1 L580.3 360.1 L576.7 360.6 L570.0 361.2 L565.3 361.6 L561.3 362.0 L553.7 362.6 L549.9 362.9 L544.0 363.4 L538.3 363.8 L534.5 364.1 L527.0 364.6 L522.0 364.6 L517.3 364.4 L512.3 364.1 L506.4 363.6 L500.0 363.0 L493.7 362.3 L487.2 361.8 L481.6 361.6 L477.2 361.6 L470.5 362.8 L470.5 362.8M359.9 299.4 L357.2 295.5 L355.3 292.3 L353.4 289.1 L351.5 285.9 L349.7 282.7 L348.0 279.4 L346.2 276.1 L344.5 272.8 L342.4 269.1 L339.8 265.1 L337.4 261.2 L336.3 258.0 L335.7 256.6M729.0 307.1 L724.5 307.0 L720.3 307.1 L712.4 307.4 L708.3 307.8 L702.1 309.3 L699.4 310.3 L694.5 312.6 L690.1 315.1 L685.8 317.6 L681.1 320.0 L676.1 322.2 L671.0 324.3 L665.9 326.4 L660.9 328.6 L658.4 329.7 L653.5 331.9 L648.4 334.1 L643.1 336.1 L637.7 338.0 L634.9 338.9 L629.3 340.8 L623.6 342.6 L619.1 343.9 L614.8 345.1 L608.7 346.6 L605.5 347.3 L599.1 348.7 L593.7 349.9 L589.5 350.8 L582.8 352.0 L579.4 352.6 L572.4 353.6 L568.7 354.0 L563.3 354.5 L557.4 355.1 L553.5 355.4 L545.8 356.0 L541.9 356.3 L537.2 356.7 L530.3 357.2 L526.3 357.5 L520.6 357.7 L513.7 357.8 L509.1 357.7 L504.3 357.4 L499.3 357.1 L492.8 356.6 L486.2 356.1 L479.6 355.9 L475.3 356.0 L471.1 356.1 L464.5 355.7 L460.6 355.1M365.3 300.4 L361.7 295.9 L359.4 292.2 L357.4 289.0 L355.5 285.9 L353.7 282.7 L351.8 279.5 L350.0 276.2 L348.2 273.0 L346.2 269.3 L343.9 265.4 L341.7 261.7 L339.5 257.9 L337.8 254.3 L337.3 253.6M720.1 300.0 L715.1 299.6 L707.8 299.6 L701.9 299.6 L698.1 300.0 L691.5 301.2 L687.8 302.5 L683.7 304.3 L679.3 306.8 L675.0 309.5 L670.6 312.0 L666.0 314.4 L661.3 316.7 L656.5 319.0 L651.7 321.3 L646.9 323.6 L641.9 325.8 L636.9 328.0 L633.8 329.2 L629.0 331.0 L623.5 333.0 L618.0 334.8 L614.8 335.8 L609.3 337.4 L603.3 339.0 L600.2 339.8 L594.0 341.3 L588.0 342.6 L584.5 343.4 L578.0 344.7 L574.6 345.3 L567.7 346.4 L564.2 346.9 L556.9 347.7 L553.0 348.0 L548.1 348.5 L541.4 349.0 L537.5 349.2 L531.1 349.7 L525.6 350.0 L521.6 350.3 L514.7 350.5 L509.1 350.6 L504.6 350.6 L499.9 350.4 L493.3 350.0 L486.7 349.5 L480.1 349.2 L475.6 349.1 L471.5 349.3 L464.8 349.3 L458.5 348.6 L452.8 347.6 L450.0 347.0M370.6 301.5 L367.9 298.1 L365.6 295.2 L363.5 292.1 L361.3 288.6 L358.8 284.6 L356.5 280.8 L354.2 276.9 L352.0 273.1 L350.1 269.9 L348.3 266.7 L346.5 263.4 L344.7 260.2 L342.9 256.9 L340.9 253.8 L338.8 250.8M709.0 291.6 L703.6 291.4 L696.7 291.1 L690.3 291.0 L686.2 291.2 L679.8 292.3 L676.7 293.3 L672.0 295.6 L668.0 298.4 L664.1 301.2 L662.1 302.5 L657.9 305.2 L653.5 307.8 L649.0 310.2 L644.5 312.7 L641.6 314.2 L637.5 316.3 L632.8 318.6 L627.8 320.8 L622.7 322.9 L617.4 324.9 L612.1 326.8 L609.2 327.8 L603.6 329.6 L597.8 331.4 L594.9 332.2 L588.7 333.7 L582.8 335.1 L579.3 335.9 L572.8 337.2 L569.5 337.8 L562.8 339.0 L559.3 339.6 L552.1 340.5 L548.3 340.8 L542.2 341.3 L536.5 341.6 L532.5 341.9 L525.7 342.3 L520.5 342.5 L516.4 342.7 L509.6 342.9 L503.5 342.9 L499.0 342.8 L494.2 342.6 L488.4 342.3 L481.7 341.8 L474.9 341.5 L470.0 341.4 L465.5 341.3 L460.6 341.1 L454.4 340.4 L448.8 339.4 L441.7 337.7 L434.3 336.0 L434.3 336.0M378.9 304.2 L374.7 300.8 L372.3 297.9 L368.7 293.4 L365.8 289.2 L363.6 285.8 L361.7 282.6 L359.7 279.5 L357.8 276.3 L355.8 273.2 L353.5 269.5 L351.2 265.6 L349.2 262.0 L347.4 258.4 L345.5 254.8 L342.9 250.7 L340.4 247.9 L340.4 247.9M684.7 275.7 L680.7 276.9 L675.2 277.8 L669.6 279.6 L665.2 282.2 L661.7 285.2 L658.5 288.4 L655.6 291.3 L653.6 293.2 L649.9 296.1 L645.9 298.8 L641.6 301.4 L637.2 304.0 L632.9 306.5 L628.5 309.1 L623.8 311.4 L619.0 313.7 L613.9 315.8 L610.8 317.0 L605.9 318.8 L600.4 320.7 L594.9 322.6 L591.9 323.6 L586.3 325.3 L580.2 326.8 L577.0 327.5 L570.6 328.9 L566.4 329.7 L560.6 330.7 L555.6 331.6 L550.4 332.4 L545.7 333.0 L539.1 333.5 L535.1 333.8 L529.0 334.1 L522.8 334.3 L518.7 334.5 L513.1 334.7 L506.1 334.8 L501.7 334.8 L497.1 334.7 L491.1 334.5 L484.3 334.1 L477.7 333.7 L472.7 333.3 L467.8 333.0 L462.9 332.7 L457.6 332.3 L451.6 331.5 L445.6 330.4 L438.7 329.0 L432.0 327.6 L424.7 325.6 L420.3 323.8 L412.2 320.0 L404.3 315.9 L397.0 311.6 L389.9 307.1 L382.9 302.6 L379.7 300.2 L374.4 294.7 L372.1 291.7 L369.9 288.7 L367.8 285.7 L365.3 281.8 L362.8 277.9 L360.3 273.9 L357.7 270.1 L355.7 267.0 L353.8 263.8 L352.0 260.5 L350.4 257.2 L348.8 253.9 L346.9 250.7 L344.0 246.9 L342.2 244.8M663.0 261.2 L659.1 264.0 L657.4 267.0 L655.6 269.6 L652.8 273.0 L651.5 274.8 L649.4 278.7 L648.1 280.8 L645.7 284.1 L642.6 287.4 L638.8 290.3 L636.6 291.7 L632.4 294.2 L628.2 296.8 L624.1 299.5 L619.9 302.1 L615.3 304.6 L610.5 306.8 L607.9 307.9 L602.6 309.9 L597.1 311.8 L591.7 313.7 L589.0 314.7 L583.5 316.6 L577.7 318.3 L573.5 319.4 L568.3 320.5 L562.0 321.7 L558.2 322.3 L551.5 323.4 L548.0 324.0 L541.5 324.9 L537.1 325.4 L532.7 325.7 L525.1 326.0 L520.9 326.1 L516.6 326.2 L509.1 326.4 L503.9 326.5 L499.5 326.5 L494.1 326.4 L487.2 326.2 L480.7 325.8 L475.8 325.5 L470.9 325.2 L466.0 325.0 L460.2 324.6 L453.8 324.0 L447.8 323.2 L442.0 322.2 L436.5 321.1 L430.6 319.8 L421.3 317.0 L416.9 315.2 L408.5 311.5 L403.2 309.1 L396.2 305.7 L388.6 301.6 L382.1 297.0 L379.2 294.2 L376.6 291.4 L373.1 286.8 L370.1 282.6 L367.9 279.3 L366.0 276.1 L363.9 273.0 L361.9 270.0 L359.3 266.3 L356.7 262.3 L354.7 258.6 L353.0 255.1 L351.3 251.6 L349.1 247.8 L346.7 244.5 L344.2 241.6 L344.2 241.6M647.6 250.4 L648.0 253.3 L647.2 257.7 L646.9 260.1 L646.1 262.9 L644.3 266.2 L641.9 269.6 L640.8 271.7 L638.6 275.5 L637.4 277.3 L634.3 280.6 L630.6 283.6 L626.4 286.2 L622.1 288.8 L618.1 291.5 L615.0 293.6 L611.8 295.5 L608.7 297.2 L604.8 299.0 L599.6 301.1 L594.3 303.1 L588.8 305.0 L585.6 306.1 L580.7 307.9 L575.1 309.8 L569.1 311.4 L566.0 312.1 L559.4 313.4 L556.1 314.0 L549.2 315.1 L545.7 315.6 L538.7 316.7 L535.0 317.1 L528.3 317.6 L523.2 317.9 L519.0 318.0 L512.6 318.1 L506.2 318.2 L501.9 318.3 L497.3 318.4 L489.9 318.3 L484.0 318.1 L479.3 317.9 L474.5 317.7 L469.1 317.5 L462.1 317.2 L455.3 316.8 L450.0 316.3 L444.2 315.5 L437.8 314.4 L432.0 313.1 L426.9 311.8 L421.6 310.1 L413.0 307.0 L408.4 305.3 L399.4 301.9 L395.2 300.1 L387.6 295.9 L384.4 293.4 L379.6 288.5 L376.7 285.0 L374.5 282.1 L372.3 279.1 L369.9 275.4 L367.2 271.4 L364.2 267.1 L361.8 263.7 L359.8 260.6 L357.9 257.4 L356.3 254.1 L354.8 250.7 L353.1 247.4 L351.1 244.3 L347.5 239.8 L346.3 238.5M642.3 245.3 L641.1 247.2 L639.2 251.1 L638.8 253.4 L638.5 256.7 L637.5 260.3 L636.1 262.4 L633.7 265.7 L631.2 269.3 L629.8 271.0 L626.6 274.2 L622.9 277.1 L618.7 279.8 L614.5 282.4 L610.4 285.1 L606.3 287.8 L601.7 290.2 L596.7 292.4 L591.5 294.5 L586.1 296.4 L580.8 298.4 L578.0 299.4 L572.6 301.3 L566.8 303.0 L563.7 303.8 L557.3 305.2 L552.6 306.0 L547.2 306.9 L542.2 307.7 L536.7 308.5 L532.5 309.0 L525.5 309.6 L521.5 309.9 L515.7 310.1 L508.9 310.2 L504.7 310.3 L500.3 310.4 L492.6 310.5 L487.4 310.5 L482.8 310.4 L478.1 310.3 L471.1 310.1 L464.4 309.9 L459.8 309.9 L455.1 309.7 L450.0 309.4 L443.7 308.7 L437.9 307.7 L431.9 306.4 L423.7 304.3 L417.5 302.4 L412.7 300.9 L404.2 298.1 L398.7 296.1 L390.7 292.1 L384.4 287.2 L381.9 284.4 L379.2 281.3 L375.6 276.7 L372.7 272.5 L370.7 269.4 L368.5 266.4 L366.3 263.4 L363.6 259.7 L361.1 255.8 L359.5 252.3 L358.0 248.9 L356.2 245.3 L353.5 241.3 L350.9 238.1 L348.4 235.3 L348.4 235.3M637.3 240.5 L633.7 243.4 L632.2 245.5 L630.8 249.4 L630.4 251.7 L629.1 255.8 L627.9 257.8 L625.3 261.4 L623.9 263.1 L620.7 266.3 L616.9 269.2 L612.8 271.9 L608.7 274.5 L604.7 277.3 L600.6 280.0 L596.2 282.6 L591.2 284.7 L585.8 286.7 L580.4 288.6 L577.7 289.6 L572.3 291.6 L567.0 293.6 L561.3 295.3 L558.2 296.1 L551.7 297.4 L548.1 298.0 L541.4 299.1 L537.8 299.7 L531.0 300.7 L527.4 301.2 L519.8 301.9 L515.8 302.1 L511.1 302.2 L503.4 302.3 L498.8 302.4 L494.6 302.5 L487.9 302.7 L481.7 302.7 L477.3 302.7 L472.7 302.6 L465.9 302.5 L459.2 302.4 L454.7 302.4 L450.0 302.2 L444.8 301.8 L438.7 301.0 L432.6 299.8 L424.9 297.9 L417.7 296.0 L412.8 294.5 L407.7 293.1 L398.6 289.9 L391.0 285.7 L385.2 280.5 L382.7 277.7 L380.0 274.6 L376.7 270.2 L373.4 265.9 L371.2 262.9 L368.9 259.9 L366.6 256.9 L364.3 253.0 L362.7 249.6 L361.1 246.2 L359.3 242.6 L356.4 238.4 L353.2 234.8 L350.5 232.1 L350.5 232.1M632.2 235.6 L627.7 238.0 L624.2 241.1 L621.9 244.8 L621.0 246.8 L619.4 250.9 L618.4 252.9 L615.9 256.5 L613.9 258.3 L610.2 260.8 L605.8 263.3 L601.6 265.9 L597.6 268.7 L593.9 271.6 L589.9 274.4 L585.0 276.6 L579.3 278.4 L576.4 279.3 L570.7 281.1 L565.5 283.1 L560.4 285.2 L557.4 286.4 L552.0 288.0 L545.3 289.2 L541.8 289.7 L535.1 290.7 L531.2 291.2 L524.9 292.3 L520.9 292.9 L515.1 293.6 L509.5 293.9 L505.2 294.0 L499.6 294.0 L492.2 294.1 L488.0 294.2 L483.9 294.4 L476.0 294.7 L471.3 294.8 L466.8 294.7 L461.3 294.6 L454.1 294.5 L448.5 294.3 L443.6 294.0 L437.8 293.2 L430.8 291.7 L424.5 290.1 L419.4 288.7 L414.4 287.4 L405.3 284.7 L400.2 282.7 L392.9 278.3 L389.4 275.5 L384.2 270.5 L381.6 267.7 L378.6 264.3 L374.5 259.4 L372.0 256.2 L369.8 253.1 L367.9 249.9 L366.3 246.6 L364.7 243.2 L363.0 240.0 L360.0 236.0 L355.7 231.4 L352.8 228.7 L352.8 228.7M627.0 230.6 L621.3 232.3 L616.6 234.7 L612.8 237.6 L610.0 241.0 L608.8 242.8 L606.3 246.4 L603.0 249.6 L598.6 252.1 L593.9 254.5 L589.5 257.0 L585.8 259.6 L583.6 261.2 L579.8 264.1 L575.1 266.4 L572.1 267.4 L566.3 269.0 L560.6 270.7 L555.5 272.7 L552.8 273.9 L547.9 276.1 L542.4 278.0 L537.0 279.1 L532.3 279.7 L527.1 280.5 L521.7 281.2 L516.9 282.0 L511.4 282.9 L506.9 283.5 L500.0 284.0 L495.7 284.0 L491.0 284.1 L483.1 284.4 L479.1 284.6 L474.8 284.9 L467.0 285.2 L462.6 285.2 L458.0 285.1 L452.5 284.9 L445.8 284.4 L439.5 283.7 L433.9 282.7 L428.7 281.4 L421.3 279.2 L414.0 277.0 L409.2 275.5 L400.3 272.1 L396.4 270.0 L392.9 267.8 L386.5 262.9 L383.0 259.8 L378.3 254.8 L375.9 251.9 L373.8 248.9 L371.8 245.7 L370.1 242.3 L368.2 238.6 L365.0 234.3 L361.1 230.5 L358.0 227.7 L355.2 225.4M620.1 224.6 L614.0 226.2 L608.1 227.8 L605.4 228.8 L601.1 231.4 L598.7 233.1 L595.3 235.6 L591.0 238.2 L586.9 239.9 L583.3 241.3 L578.5 243.7 L574.1 246.2 L569.7 248.7 L564.9 251.0 L559.5 253.0 L554.0 254.5 L550.6 255.4 L545.1 257.3 L540.3 259.6 L535.5 261.9 L530.3 264.0 L527.4 264.9 L521.2 266.3 L517.4 267.0 L510.8 268.0 L507.2 268.5 L500.7 269.7 L496.4 270.5 L490.4 271.4 L486.6 271.8 L479.1 272.5 L475.4 272.9 L468.4 273.7 L464.2 274.1 L460.1 274.2 L453.0 274.0 L446.4 273.5 L440.3 272.8 L434.6 271.7 L429.4 270.5 L424.4 269.1 L415.3 266.2 L410.2 264.4 L402.9 261.6 L397.0 259.1 L389.6 254.9 L385.4 251.6 L380.8 247.1 L378.5 244.2 L376.4 241.1 L374.6 237.8 L371.9 233.7 L367.2 229.3 L363.4 226.3 L357.5 222.0 L357.5 222.0M612.4 218.2 L606.0 219.6 L602.7 220.2 L596.6 221.7 L591.9 224.1 L587.5 226.6 L582.8 228.9 L577.4 230.9 L574.6 231.8 L569.4 233.9 L564.5 236.2 L559.6 238.4 L554.5 240.5 L549.4 242.3 L546.2 243.3 L540.2 244.9 L534.7 246.5 L531.7 247.6 L526.7 249.8 L521.5 251.9 L515.7 253.6 L512.5 254.3 L505.6 255.4 L502.0 255.8 L495.0 256.9 L491.8 257.6 L485.8 259.2 L480.0 260.8 L476.7 261.6 L470.1 262.8 L466.7 263.4 L460.0 264.6 L456.4 265.0 L449.9 265.2 L443.1 264.9 L437.6 264.3 L431.2 263.2 L426.0 261.9 L421.1 260.4 L412.3 256.9 L408.1 255.1 L399.3 251.6 L391.7 247.4 L385.5 242.4 L383.1 239.5 L381.1 236.4 L379.3 233.1 L373.8 227.8 L370.4 225.4 L363.8 220.7 L360.3 218.4M604.7 211.7 L597.8 212.9 L594.6 213.6 L588.9 215.3 L583.9 217.5 L579.2 219.9 L574.3 222.1 L571.7 223.2 L566.5 225.2 L561.2 227.2 L556.0 229.3 L550.6 231.2 L547.9 232.2 L542.8 234.3 L537.3 236.2 L531.4 237.9 L528.4 238.7 L522.7 240.5 L517.4 242.5 L513.8 243.7 L508.6 245.0 L502.3 246.0 L497.9 246.5 L493.4 246.8 L486.6 247.6 L483.3 248.2 L477.8 250.0 L472.4 252.0 L466.8 253.9 L463.8 254.7 L457.6 256.2 L453.4 257.0 L447.2 257.8 L443.1 258.0 L437.3 257.7 L431.2 256.9 L425.7 255.8 L416.5 252.5 L412.3 250.6 L404.0 246.9 L396.1 242.9 L389.7 238.0 L387.6 235.0 L385.5 231.9 L382.0 227.9 L377.0 223.9 L370.2 219.3 L366.0 216.2 L363.7 214.5M595.0 204.2 L592.2 205.1 L586.4 206.8 L581.0 208.8 L576.0 211.0 L571.4 213.4 L566.6 215.7 L564.2 216.8 L559.2 219.0 L554.1 221.2 L548.8 223.1 L543.3 225.0 L540.6 226.0 L535.5 228.1 L530.2 230.1 L524.5 231.9 L521.5 232.7 L515.8 234.5 L510.1 236.3 L506.9 237.1 L500.3 238.2 L496.6 238.6 L488.7 239.2 L484.8 239.5 L479.6 239.9 L474.4 241.0 L468.8 242.9 L463.5 244.9 L460.8 245.9 L454.9 247.6 L448.9 249.0 L445.3 249.6 L439.3 250.3 L432.9 250.1 L426.8 249.1 L421.5 247.6 L416.3 245.6 L408.7 242.2 L401.0 238.1 L395.3 233.5 L392.2 230.3 L389.5 227.6 L383.6 222.4 L378.9 219.1 L373.6 215.4 L367.4 210.4 L367.4 210.4" fill="none" stroke="#1c260a" stroke-width="0.6" stroke-opacity=".8" clip-path="url(#sc)"/></g><path d="M491.9 135.4L486.6 136.5L486.6 146.0L491.9 144.9Z" fill="#58585b" stroke="#151515" stroke-width="0.55"/><path d="M486.6 136.5L477.0 127.0L477.0 136.5L486.6 146.0Z" fill="#3a3a3c" stroke="#151515" stroke-width="0.55"/><path d="M509.6 138.9L499.0 144.2L499.0 153.7L509.6 148.4Z" fill="#58585b" stroke="#151515" stroke-width="0.55"/><path d="M499.0 144.2L491.9 135.4L491.9 144.9L499.0 153.7Z" fill="#3a3a3c" stroke="#151515" stroke-width="0.55"/><path d="M477.0 127.0 L485.4 121.8 L498.4 131.8 L501.3 131.0 L509.6 138.9 L499.0 144.2 L491.9 135.4 L486.6 136.5Z" fill="#646468" stroke="#151515" stroke-width="0.55"/><path d="M567.4 179.4L558.0 184.9L558.0 194.3L567.4 188.8Z" fill="#58585b" stroke="#151515" stroke-width="0.55"/><path d="M562.7 186.4L554.9 191.0L554.9 200.4L562.7 195.8Z" fill="#58585b" stroke="#151515" stroke-width="0.55"/><path d="M554.9 191.0L548.6 189.6L548.6 199.0L554.9 200.4Z" fill="#3a3a3c" stroke="#151515" stroke-width="0.55"/><path d="M548.6 189.6L536.9 195.0L536.9 204.4L548.6 199.0Z" fill="#58585b" stroke="#151515" stroke-width="0.55"/><path d="M536.9 195.0L517.3 185.6L517.3 195.0L536.9 204.4Z" fill="#3a3a3c" stroke="#151515" stroke-width="0.55"/><path d="M517.3 185.6 L523.5 181.7 L544.0 178.6 L559.5 174.0 L567.4 179.4 L558.0 184.9 L562.7 186.4 L554.9 191.0 L548.6 189.6 L536.9 195.0Z" fill="#646468" stroke="#151515" stroke-width="0.55"/><path d="M523.6 193.5L520.4 196.6L520.4 207.6L523.6 204.5Z" fill="#58585b" stroke="#151515" stroke-width="0.55"/><path d="M475.0 202.0L473.5 199.0L473.5 210.0L475.0 213.0Z" fill="#3a3a3c" stroke="#151515" stroke-width="0.55"/><path d="M525.0 199.7L512.6 206.0L512.6 217.0L525.0 210.7Z" fill="#58585b" stroke="#151515" stroke-width="0.55"/><path d="M495.4 207.6L487.6 208.3L487.6 219.3L495.4 218.6Z" fill="#58585b" stroke="#151515" stroke-width="0.55"/><path d="M512.6 206.0L503.2 211.5L503.2 222.5L512.6 217.0Z" fill="#58585b" stroke="#151515" stroke-width="0.55"/><path d="M503.2 211.5L495.4 207.6L495.4 218.6L503.2 222.5Z" fill="#3a3a3c" stroke="#151515" stroke-width="0.55"/><path d="M487.6 208.3L475.0 217.0L475.0 228.0L487.6 219.3Z" fill="#58585b" stroke="#151515" stroke-width="0.55"/><path d="M475.0 217.0L463.3 212.3L463.3 223.3L475.0 228.0Z" fill="#3a3a3c" stroke="#151515" stroke-width="0.55"/><path d="M463.3 212.3 L475.0 202.0 L473.5 199.0 L497.0 195.0 L497.0 190.3 L505.6 184.0 L523.6 193.5 L520.4 196.6 L525.0 199.7 L512.6 206.0 L503.2 211.5 L495.4 207.6 L487.6 208.3 L475.0 217.0Z" fill="#646468" stroke="#151515" stroke-width="0.55"/><path d="M617.5 311.5L613.4 309.4L613.4 319.4L617.5 321.5Z" fill="#3a3a3c" stroke="#151515" stroke-width="0.55"/><path d="M630.5 314.5L625.5 313.5L625.5 323.5L630.5 324.5Z" fill="#3a3a3c" stroke="#151515" stroke-width="0.55"/><path d="M653.0 297.0L644.0 318.0L644.0 328.0L653.0 307.0Z" fill="#58585b" stroke="#151515" stroke-width="0.55"/><path d="M644.0 318.0L637.0 316.5L637.0 326.5L644.0 328.0Z" fill="#3a3a3c" stroke="#151515" stroke-width="0.55"/><path d="M625.5 313.5L625.0 318.5L625.0 328.5L625.5 323.5Z" fill="#58585b" stroke="#151515" stroke-width="0.55"/><path d="M625.0 318.5L617.5 316.0L617.5 326.0L625.0 328.5Z" fill="#3a3a3c" stroke="#151515" stroke-width="0.55"/><path d="M637.0 316.5L636.0 320.5L636.0 330.5L637.0 326.5Z" fill="#58585b" stroke="#151515" stroke-width="0.55"/><path d="M636.0 320.5L630.5 319.0L630.5 329.0L636.0 330.5Z" fill="#3a3a3c" stroke="#151515" stroke-width="0.55"/><path d="M613.4 309.4 L619.5 297.0 L646.0 303.0 L653.0 297.0 L644.0 318.0 L637.0 316.5 L636.0 320.5 L630.5 319.0 L630.5 314.5 L625.5 313.5 L625.0 318.5 L617.5 316.0 L617.5 311.5Z" fill="#646468" stroke="#151515" stroke-width="0.55"/><path d="M645.4 279.3L644.1 284.3L644.1 290.8L645.4 285.8Z" fill="#58585b" stroke="#151515" stroke-width="0.55"/><path d="M612.8 286.8L612.1 280.5L612.1 287.0L612.8 293.3Z" fill="#3a3a3c" stroke="#151515" stroke-width="0.55"/><path d="M645.4 296.8L612.8 286.8L612.8 293.3L645.4 303.3Z" fill="#3a3a3c" stroke="#151515" stroke-width="0.55"/><path d="M658.5 288.0L651.0 301.5L651.0 308.0L658.5 294.5Z" fill="#58585b" stroke="#151515" stroke-width="0.55"/><path d="M651.0 301.5L645.4 296.8L645.4 303.3L651.0 308.0Z" fill="#3a3a3c" stroke="#151515" stroke-width="0.55"/><path d="M612.1 280.5 L620.3 274.9 L645.4 279.3 L644.1 284.3 L658.5 288.0 L651.0 301.5 L645.4 296.8 L612.8 286.8Z" fill="#646468" stroke="#151515" stroke-width="0.55"/><path d="M703.4 285.7L699.0 290.7L699.0 294.7L703.4 289.7Z" fill="#58585b" stroke="#151515" stroke-width="0.55"/><path d="M699.0 290.7L694.8 296.5L694.8 300.5L699.0 294.7Z" fill="#58585b" stroke="#151515" stroke-width="0.55"/><path d="M694.8 296.5L688.4 295.0L688.4 299.0L694.8 300.5Z" fill="#3a3a3c" stroke="#151515" stroke-width="0.55"/><path d="M688.4 295.0L687.0 297.2L687.0 301.2L688.4 299.0Z" fill="#58585b" stroke="#151515" stroke-width="0.55"/><path d="M687.0 297.2L677.6 293.0L677.6 297.0L687.0 301.2Z" fill="#3a3a3c" stroke="#151515" stroke-width="0.55"/><path d="M677.6 293.0 L689.8 279.0 L703.4 285.7 L699.0 290.7 L694.8 296.5 L688.4 295.0 L687.0 297.2Z" fill="#646468" stroke="#151515" stroke-width="0.55"/><path d="M721.8 296.5L708.5 299.6L708.5 304.6L721.8 301.5Z" fill="#58585b" stroke="#151515" stroke-width="0.55"/><path d="M708.5 299.6L704.9 290.7L704.9 295.7L708.5 304.6Z" fill="#3a3a3c" stroke="#151515" stroke-width="0.55"/><path d="M704.9 290.7 L711.4 290.0 L721.8 296.5 L708.5 299.6Z" fill="#646468" stroke="#151515" stroke-width="0.55"/><path d="M676.9 307.3L671.8 315.9L671.8 320.4L676.9 311.8Z" fill="#58585b" stroke="#151515" stroke-width="0.55"/><path d="M658.9 323.0L656.0 319.5L656.0 324.0L658.9 327.5Z" fill="#3a3a3c" stroke="#151515" stroke-width="0.55"/><path d="M687.6 320.9L682.6 328.8L682.6 333.3L687.6 325.4Z" fill="#58585b" stroke="#151515" stroke-width="0.55"/><path d="M682.6 328.8L658.9 323.0L658.9 327.5L682.6 333.3Z" fill="#3a3a3c" stroke="#151515" stroke-width="0.55"/><path d="M656.0 319.5 L663.2 305.0 L676.9 307.3 L671.8 315.9 L687.6 320.9 L682.6 328.8 L658.9 323.0Z" fill="#646468" stroke="#151515" stroke-width="0.55"/><path d="M672.8 380.2L663.9 380.6L663.9 384.8L672.8 384.4Z" fill="#47474a" stroke="#151515" stroke-width="0.55"/><path d="M663.9 380.6L663.1 376.6L663.1 380.8L663.9 384.8Z" fill="#47474a" stroke="#151515" stroke-width="0.55"/><path d="M663.1 376.6 L672.5 375.9 L672.8 380.2 L663.9 380.6Z" fill="#6c6c70" stroke="#151515" stroke-width="0.55"/><path d="M670.3 396.7L666.0 396.7L666.0 402.2L670.3 402.2Z" fill="#47474a" stroke="#151515" stroke-width="0.55"/><path d="M678.5 401.8L671.0 402.0L671.0 407.5L678.5 407.3Z" fill="#47474a" stroke="#151515" stroke-width="0.55"/><path d="M671.0 402.0L670.3 396.7L670.3 402.2L671.0 407.5Z" fill="#47474a" stroke="#151515" stroke-width="0.55"/><path d="M666.0 396.7L665.3 403.2L665.3 408.7L666.0 402.2Z" fill="#47474a" stroke="#151515" stroke-width="0.55"/><path d="M665.3 403.2L652.0 403.6L652.0 409.1L665.3 408.7Z" fill="#47474a" stroke="#151515" stroke-width="0.55"/><path d="M652.0 403.6L649.5 391.0L649.5 396.5L652.0 409.1Z" fill="#47474a" stroke="#151515" stroke-width="0.55"/><path d="M649.5 391.0 L665.3 389.6 L668.2 394.6 L678.2 394.6 L678.5 401.8 L671.0 402.0 L670.3 396.7 L666.0 396.7 L665.3 403.2 L652.0 403.6Z" fill="#6c6c70" stroke="#151515" stroke-width="0.55"/><path d="M667.4 420.4L653.8 421.4L653.8 425.0L667.4 424.0Z" fill="#47474a" stroke="#151515" stroke-width="0.55"/><path d="M653.8 421.4L653.0 410.4L653.0 414.0L653.8 425.0Z" fill="#47474a" stroke="#151515" stroke-width="0.55"/><path d="M653.0 410.4 L666.0 409.7 L667.4 420.4 L653.8 421.4Z" fill="#6c6c70" stroke="#151515" stroke-width="0.55"/><path d="M640.9 424.8L636.6 424.8L636.6 432.3L640.9 432.3Z" fill="#47474a" stroke="#151515" stroke-width="0.55"/><path d="M651.2 429.8L641.6 430.5L641.6 438.0L651.2 437.3Z" fill="#47474a" stroke="#151515" stroke-width="0.55"/><path d="M641.6 430.5L640.9 424.8L640.9 432.3L641.6 438.0Z" fill="#47474a" stroke="#151515" stroke-width="0.55"/><path d="M636.6 430.9L625.8 431.2L625.8 438.7L636.6 438.4Z" fill="#47474a" stroke="#151515" stroke-width="0.55"/><path d="M625.8 431.2L624.3 418.3L624.3 425.8L625.8 438.7Z" fill="#47474a" stroke="#151515" stroke-width="0.55"/><path d="M624.3 418.3 L635.1 418.3 L640.9 416.6 L650.2 416.9 L651.2 429.8 L641.6 430.5 L640.9 424.8 L636.6 424.8 L636.6 430.9 L625.8 431.2Z" fill="#6c6c70" stroke="#151515" stroke-width="0.55"/><path d="M525.2 412.9L523.2 406.8L523.2 418.3L525.2 424.4Z" fill="#47474a" stroke="#151515" stroke-width="0.55"/><path d="M536.8 417.0L525.2 412.9L525.2 424.4L536.8 428.5Z" fill="#47474a" stroke="#151515" stroke-width="0.55"/><path d="M523.2 406.8 L535.4 403.4 L536.8 417.0 L525.2 412.9Z" fill="#6c6c70" stroke="#151515" stroke-width="0.55"/><path d="M562.7 430.6L540.9 423.0L540.9 434.5L562.7 442.1Z" fill="#47474a" stroke="#151515" stroke-width="0.55"/><path d="M549.0 397.2 L559.3 397.2 L561.3 419.0 L562.7 430.6 L540.9 423.0 L541.6 411.5 L548.4 408.8Z" fill="#6c6c70" stroke="#151515" stroke-width="0.55"/><path d="M590.7 396.5L566.0 397.2L566.0 408.0L590.7 407.3Z" fill="#47474a" stroke="#151515" stroke-width="0.55"/><path d="M566.0 397.2L564.8 389.0L564.8 399.8L566.0 408.0Z" fill="#47474a" stroke="#151515" stroke-width="0.55"/><path d="M564.8 389.0 L589.3 387.0 L590.7 396.5 L566.0 397.2Z" fill="#6c6c70" stroke="#151515" stroke-width="0.55"/><path d="M591.3 432.7L569.5 434.7L569.5 442.2L591.3 440.2Z" fill="#47474a" stroke="#151515" stroke-width="0.55"/><path d="M569.5 434.7L566.8 421.8L566.8 429.3L569.5 442.2Z" fill="#47474a" stroke="#151515" stroke-width="0.55"/><path d="M566.8 421.8 L590.7 421.8 L591.3 432.7 L569.5 434.7Z" fill="#6c6c70" stroke="#151515" stroke-width="0.55"/><path d="M615.2 394.5L597.5 395.9L597.5 407.4L615.2 406.0Z" fill="#47474a" stroke="#151515" stroke-width="0.55"/><path d="M597.5 395.9L596.1 384.3L596.1 395.8L597.5 407.4Z" fill="#47474a" stroke="#151515" stroke-width="0.55"/><path d="M596.1 384.3 L612.5 382.9 L615.2 385.6 L615.2 394.5 L597.5 395.9Z" fill="#6c6c70" stroke="#151515" stroke-width="0.55"/><path d="M613.8 422.4L598.2 423.5L598.2 431.5L613.8 430.4Z" fill="#47474a" stroke="#151515" stroke-width="0.55"/><path d="M598.2 423.5L596.5 408.1L596.5 416.1L598.2 431.5Z" fill="#47474a" stroke="#151515" stroke-width="0.55"/><path d="M596.5 408.1 L612.5 408.1 L613.8 422.4 L598.2 423.5Z" fill="#6c6c70" stroke="#151515" stroke-width="0.55"/><path d="M653.8 425.5 L671.8 424.0 L672.5 430.5 L663.1 436.2 L654.5 436.7Z" fill="#7c7c7c" stroke="#555" stroke-width="0.3"/><path d="M712.0 382.4 L722.8 380.2 L723.5 377.8 L732.8 376.9 L734.0 386.7 L714.1 398.2Z" fill="#7c7c7c" stroke="#555" stroke-width="0.3"/><path d="M513.5 281L534 269.6L553.4 276.2L524.5 293.5L513.5 289.5Z" fill="#1c1416"/><path d="M514 280.7L534 269.6L541 272.7L521.5 284.2Z" fill="#5d6f8f"/><path d="M517.5 278.8l7.2 3.6M521 276.8l7.2 3.6M524.500 274.900l7.200 3.600M528 272.900l7.200 3.600M531.500 271l7.200 3.600" stroke="#1a1a22" stroke-width="0.900" fill="none"/><path d="M521.500 284.200v5.500M525 285v3" stroke="#ddd" stroke-width="0.900"/><path d="M505.500 292l7-3.200M510.500 294.500c2 1.500 5 1.500 7 0" stroke="#111" stroke-width="0.800" fill="none"/><path d="M506 291.500l6-2.800" stroke="#ccc" stroke-width="0.500"/><ellipse cx="543.2" cy="291.3" rx="4.6" ry="1.8" fill="#1a2210"/><path d="M541 272.500L556 261.800L563 267.300" fill="none" stroke="#2c3612" stroke-width="0.500"/><path d="M486.0 115.5L310.5 217.0M486.0 115.5L784.3 286.0M310.5 217.0L608.8 387.5M784.3 286.0L608.8 387.5M486.0 115.5L486.6 207.0M310.5 217.0L310.5 308.0M784.3 286.0L784.3 377.8M608.8 387.5L608.2 478.8M486.6 207.0L310.5 308.0M486.6 207.0L784.3 377.8" fill="none" stroke="#1a1a1a" stroke-width="0.7"/><path d="M459.5 150L522.5 160.700M306.6 245L363.7 213.2M306.6 248.8L360 219.5M306.6 252.5L355 224.5M600 207.8L787 315.2M609.8 217.6L787 318.7M623.4 229.3L787 322.3" fill="none" stroke="#161616" stroke-width="0.9"/></svg>
</body></html>
